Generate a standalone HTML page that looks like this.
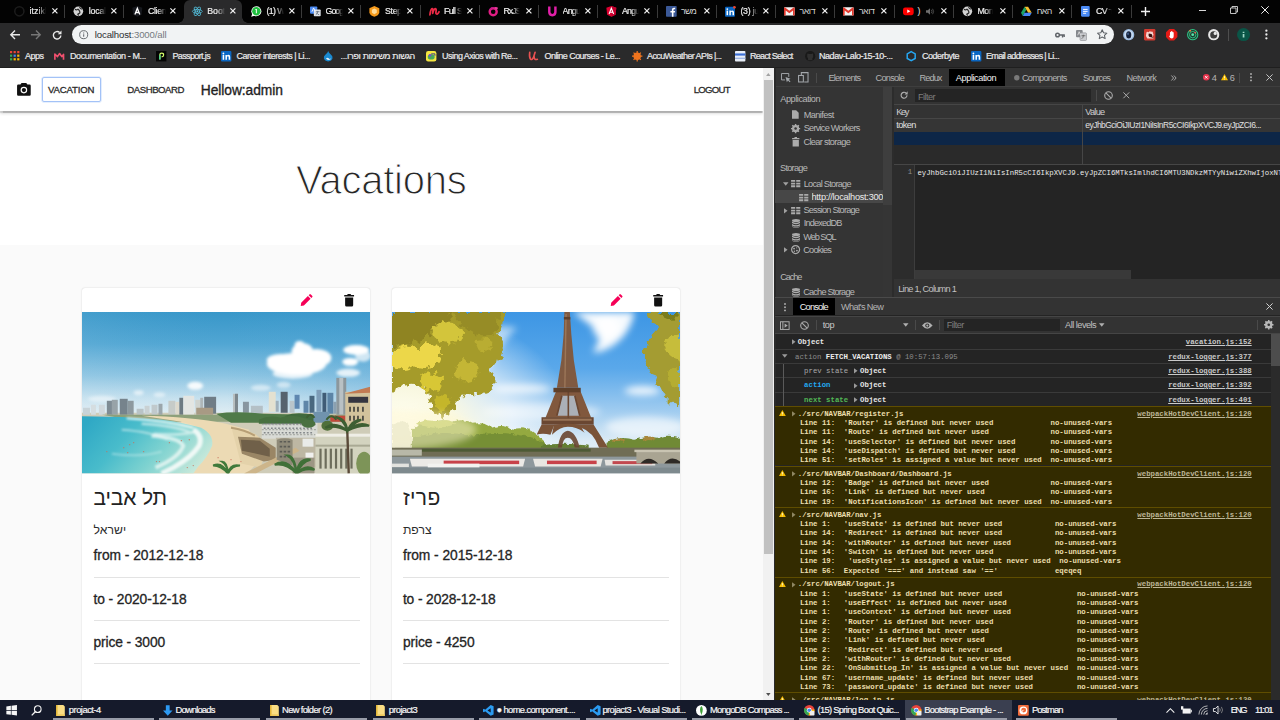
<!DOCTYPE html>
<html lang="en"><head><meta charset="utf-8"><title>Bootstrap Example</title>
<style>
*{box-sizing:border-box;margin:0;padding:0}
html,body{width:1280px;height:720px;overflow:hidden;background:#fff}
body{font-family:"Liberation Sans","DejaVu Sans",sans-serif;position:relative}
.abs{position:absolute}
.t{position:absolute;white-space:nowrap;line-height:1}
svg{position:absolute;overflow:visible}
#tabs{position:absolute;left:0;top:0;width:1280px;height:23px;background:#030303}
#tool{position:absolute;left:0;top:22.500px;width:1280px;height:45.500px;background:#2a2a2b}
.fade{-webkit-mask-image:linear-gradient(90deg,#000 55%,transparent 100%);mask-image:linear-gradient(90deg,#000 55%,transparent 100%);overflow:hidden}

#page{position:absolute;left:0;top:68px;width:763px;height:632px;background:#fafafa;overflow:hidden}
#nav{position:absolute;left:0;top:0;width:763px;height:42.500px;background:#fff;box-shadow:0 1.500px 1px rgba(0,0,0,.2),0 2.500px 3px rgba(0,0,0,.16)}
#hero{position:absolute;left:0;top:42px;width:763px;height:135px;background:#fff}
.card{position:absolute;top:288.200px;height:440px;background:#fff;border-radius:3px;box-shadow:0 0 1.500px rgba(0,0,0,.22);overflow:hidden}
.hr{position:absolute;height:1px;background:#e3e3e3}
#sb{position:absolute;left:763px;top:68px;width:11px;height:632px;background:#f1f1f1}
#sb .th{position:absolute;left:1px;top:12.300px;width:8.500px;height:473.700px;background:#c1c1c1}

#dev{position:absolute;left:774px;top:68px;width:506px;height:632px;background:#242424}
.wb{position:absolute;left:775px;width:496px;background:#332b00;border-top:1px solid #5f4d00}
.cr{position:absolute;left:775px;width:496px;height:1px;background:#3a3a3a}
.mm{position:absolute;white-space:pre;line-height:1;font-family:'Liberation Mono','DejaVu Sans Mono',monospace;font-size:7.330px;font-weight:bold;color:#ecdfae}

#tb{position:absolute;left:0;top:700px;width:1280px;height:20px;background:#151a2b}
.ul{position:absolute;top:718.200px;height:1.800px;background:#989ca8}
</style></head>
<body>
<div id="page"><div id="hero"></div><div id="nav"></div></div>
<svg style="left:17.100px;top:83.100px;width:13.800px;height:12.700px" viewBox="0 0 14 13"><path d="M4.600 0h4.800l1.200 1.600h2.200Q14 1.600 14 2.800v9Q14 13 12.800 13H1.200Q0 13 0 11.800v-9Q0 1.600 1.200 1.600h2.200z" fill="#111"/><circle cx="7" cy="7.300" r="3.400" fill="#fff"/><circle cx="7" cy="7.300" r="2.200" fill="#111"/></svg>
<div class="abs" style="left:42.200px;top:77.200px;width:58.800px;height:25.100px;border:1px solid #a3c2f7;border-radius:2px;box-shadow:0 0 0 .6px rgba(160,195,250,.5)"></div>
<div class="t" style="left:48px;top:82px;line-height:15px;font-size:9.6px;color:#2b2b2b;letter-spacing:-0.153px;-webkit-text-stroke:.3px #2b2b2b">VACATION</div>
<div class="t" style="left:127.3px;top:82px;line-height:15px;font-size:9.6px;color:#2b2b2b;letter-spacing:-0.453px;-webkit-text-stroke:.3px #2b2b2b">DASHBOARD</div>
<div class="t" style="left:200.8px;top:80px;line-height:21px;font-size:13.8px;color:#1f1f1f;letter-spacing:-0.069px;-webkit-text-stroke:.35px #1f1f1f">Hellow:admin</div>
<div class="t" style="left:693.7px;top:82px;line-height:15px;font-size:9.6px;color:#2b2b2b;letter-spacing:-0.703px;-webkit-text-stroke:.3px #2b2b2b">LOGOUT</div>
<div class="t" style="left:296px;top:151px;line-height:58px;font-size:40px;color:#262626;letter-spacing:-0.245px;-webkit-text-stroke:1.100px #fff">Vacations</div>
<div class="card" style="left:82.4px;width:288.100px"><svg style="left:0;top:23.700px;width:288.100px;height:161.600px" viewBox="0 0 290 162" preserveAspectRatio="none">
<defs>
<linearGradient id="sk1" x1="0" y1="0" x2="0" y2="1"><stop offset="0" stop-color="#3897c9"/><stop offset=".3" stop-color="#51a6d3"/><stop offset=".6" stop-color="#8cc4e2"/><stop offset=".82" stop-color="#c8e2ef"/><stop offset="1" stop-color="#e6f0f4"/></linearGradient>
<linearGradient id="skh" x1="0" y1="0" x2="1" y2="0"><stop offset="0" stop-color="#fff" stop-opacity=".06"/><stop offset=".5" stop-color="#5aa9da" stop-opacity="0"/><stop offset="1" stop-color="#4b9fd6" stop-opacity=".25"/></linearGradient>
<linearGradient id="sea1" x1="0" y1=".2" x2="1" y2=".6"><stop offset="0" stop-color="#2fa8c5"/><stop offset=".35" stop-color="#49bccb"/><stop offset=".65" stop-color="#7dd2d0"/><stop offset="1" stop-color="#c6e8da"/></linearGradient>
<filter id="b1" x="-20%" y="-20%" width="140%" height="140%"><feGaussianBlur stdDeviation="1.800"/></filter>
<filter id="b12" x="-20%" y="-20%" width="140%" height="140%"><feGaussianBlur stdDeviation="1"/></filter>
<filter id="b05" x="-5%" y="-5%" width="110%" height="110%"><feGaussianBlur stdDeviation=".45"/></filter>
<clipPath id="c1"><rect width="290" height="162"/></clipPath>
</defs>
<g clip-path="url(#c1)">
<rect width="290" height="106" fill="url(#sk1)"/>
<rect x="0" y="0" width="290" height="106" fill="url(#skh)"/>
<g filter="url(#b1)" fill="#fff">
<ellipse cx="216" cy="52" rx="30" ry="11"/><ellipse cx="222" cy="40" rx="11" ry="9"/><ellipse cx="236" cy="46" rx="15" ry="9"/><ellipse cx="200" cy="48" rx="14" ry="6"/><ellipse cx="219" cy="33" rx="5" ry="4"/><ellipse cx="212" cy="62" rx="20" ry="5" opacity=".8"/>
<ellipse cx="276" cy="38" rx="13" ry="5"/><ellipse cx="270" cy="50" rx="8" ry="4"/><ellipse cx="268" cy="61" rx="12" ry="4" opacity=".8"/><ellipse cx="283" cy="44" rx="8" ry="6" opacity=".7"/>
<ellipse cx="114" cy="74" rx="8" ry="4" opacity=".9"/><ellipse cx="57" cy="81" rx="5" ry="2.500" opacity=".6"/><ellipse cx="78" cy="83" rx="6" ry="2.500" opacity=".5"/><ellipse cx="20" cy="87" rx="14" ry="3" opacity=".45"/>
<ellipse cx="180" cy="76" rx="10" ry="3" opacity=".5"/><ellipse cx="203" cy="73" rx="7" ry="3" opacity=".5"/>
</g>
<rect x="0" y="101" width="290" height="61" fill="#cfccb8"/>
<g filter="url(#b05)"><rect x="1" y="96" width="7" height="7" fill="#c8d3d8"/><rect x="9" y="93" width="5" height="10" fill="#d5dde0"/><rect x="17" y="93" width="6" height="10" fill="#d0d8dc"/><rect x="25" y="89" width="6" height="14" fill="#7f8c94"/><rect x="30" y="88" width="6" height="15" fill="#98a3a8"/><rect x="38" y="87" width="8" height="16" fill="#76838c"/><rect x="46" y="89" width="6" height="14" fill="#8d999f"/><rect x="55" y="97" width="7" height="6" fill="#b9c3c6"/><rect x="63" y="94" width="5" height="9" fill="#c9d1d3"/><rect x="70" y="93" width="6" height="10" fill="#c0c9cc"/><rect x="77" y="92" width="4" height="11" fill="#9ba6ab"/><rect x="87" y="89" width="7" height="14" fill="#c6cbc8"/><rect x="94" y="90" width="4" height="13" fill="#ddd9cc"/><rect x="98" y="86" width="4" height="17" fill="#6d7a82"/><rect x="102" y="84" width="11" height="19" fill="#e3e5e2"/><rect x="114" y="88" width="5" height="15" fill="#cfd3cf"/><rect x="119" y="86" width="3" height="17" fill="#aeb6b8"/><rect x="123" y="85" width="12" height="17" fill="#707d86"/><rect x="115" y="96" width="17" height="7" fill="#a89a84"/><rect x="152" y="82" width="5" height="20" fill="#b9bfc0"/><rect x="154" y="82" width="3" height="20" fill="#7c878d"/><rect x="162" y="90" width="6" height="11" fill="#8896a0"/><rect x="170" y="94" width="12" height="8" fill="#b4c0c6"/><rect x="188" y="80" width="7" height="20" fill="#e4e1d0"/><rect x="195" y="89" width="3" height="11" fill="#9fb0bb"/><rect x="200" y="80" width="7" height="21" fill="#56636e"/><rect x="209" y="89" width="5" height="12" fill="#b9c4ca"/><rect x="214" y="83" width="5" height="14" fill="#5f87b0"/><rect x="223" y="89" width="5" height="12" fill="#5f86a8"/><rect x="229" y="84" width="5" height="17" fill="#49677f"/><rect x="236" y="78" width="5" height="22" fill="#7e9db8"/><rect x="242" y="81" width="4" height="20" fill="#3f5c76"/><rect x="247" y="81" width="6" height="21" fill="#5c84a6"/><rect x="253" y="90" width="3" height="12" fill="#8aa0b0"/><rect x="256" y="66" width="10" height="37" fill="#8c979c"/><rect x="259" y="66" width="4" height="37" fill="#b9c1c4"/>
<path d="M20 103h270v7H60z" fill="#8da07a"/>
<path d="M135 102q20-3 48 0l44 1v8H150z" fill="#4f7a48"/>
<path d="M205 104q12-5 30 0 8 2 10 6h-40z" fill="#3f6a3c"/>
</g>
<!-- parking / town -->
<g filter="url(#b05)">
<rect x="181" y="110" width="56" height="17" fill="#d9dbd6"/>
<path d="M181 113h56M181 118h56M181 123h56" stroke="#a9aca6" stroke-width="1.300" stroke-dasharray="2 1.500"/>
<rect x="233" y="100" width="16" height="11" fill="#6f93ad"/>
<rect x="250" y="104" width="16" height="6" fill="#c24a3a"/>
<rect x="265" y="80" width="25" height="34" fill="#d2c29c"/><path d="M264 82l26-7v6z" fill="#c17a52"/>
<rect x="268" y="85" width="20" height="6" fill="#34363f"/>
<rect x="269" y="95" width="1.6" height="5" fill="#3b3b38"/><rect x="273" y="95" width="1.6" height="5" fill="#3b3b38"/><rect x="277" y="95" width="1.6" height="5" fill="#3b3b38"/><rect x="282" y="95" width="1.6" height="5" fill="#3b3b38"/><rect x="269" y="104" width="1.6" height="5" fill="#3b3b38"/><rect x="273" y="104" width="1.6" height="5" fill="#3b3b38"/><rect x="277" y="104" width="1.6" height="5" fill="#3b3b38"/><rect x="282" y="104" width="1.6" height="5" fill="#3b3b38"/>
<path d="M195 126h42v30h-30z" fill="#bdb7a3"/>
<rect x="222" y="127" width="11" height="8" fill="#e9ebe8"/><rect x="225" y="141" width="8" height="6" fill="#f0f0ee"/>
</g>
<!-- sand -->
<path d="M60 104Q110 105 145 112L168 118Q176 130 178 150L166 162H100V110z" fill="#ecdab4"/>
<path d="M150 114l24 8 12 10-6 24-20-4z" fill="#e4d2aa"/>
<!-- amphitheatre -->
<g filter="url(#b05)">
<path d="M157 125l22 1 16 10v12l-12 2-22-8z" fill="#9a8665"/>
<path d="M160 128l19 1 10 8v8l-28-6z" fill="#6f6048"/>
<path d="M163 162l52-26 4 3-44 23z" fill="#cdb58a"/>
<path d="M150 116q14 2 24 8" stroke="#b79f76" stroke-width="2" fill="none"/>
</g>
<!-- sea -->
<path d="M0 104.500Q40 104.500 80 108 102 111 120 116 133 123 131 134 126 146 117 155L112 162H0z" fill="url(#sea1)"/>
<g filter="url(#b12)" fill="none" stroke="#f7fcfa">
<path d="M45 106.500Q85 109 112 116" stroke-width="2.200" opacity=".9"/>
<path d="M60 112Q95 114 110 121 96 124 72 122" stroke-width="2.500" opacity=".6"/>
<path d="M112 118Q122 124 118 134 110 146 92 156L80 162" stroke-width="5" opacity=".9"/>
<path d="M70 124Q98 126 102 134 98 146 74 156" stroke-width="4" opacity=".7"/>
<path d="M40 118Q70 120 86 128" stroke-width="2" opacity=".5"/>
<path d="M30 142Q60 146 80 140" stroke-width="2" opacity=".35"/>
</g>
<g fill="#c8705a" opacity=".8"><circle cx="25" cy="140" r=".7"/><circle cx="42" cy="136" r=".7"/><circle cx="48" cy="133" r=".7"/><circle cx="52" cy="131" r=".7"/><circle cx="62" cy="140" r=".7"/><circle cx="75" cy="150" r=".7"/><circle cx="88" cy="131" r=".7"/><circle cx="100" cy="129" r=".7"/><circle cx="108" cy="128" r=".7"/><circle cx="46" cy="141" r=".7"/><circle cx="78" cy="150" r=".7"/><circle cx="106" cy="156" r=".7"/><circle cx="112" cy="154" r=".7"/><circle cx="137" cy="146" r=".7"/><circle cx="150" cy="148" r=".7"/><circle cx="160" cy="150" r=".7"/></g>
<g filter="url(#b05)">
<path d="M178 108q10-5 22-2 10-4 22 0 8 2 12 6h-56z" fill="#46703f"/>
<path d="M196 128q8-3 16 0v26l-16-6z" fill="#8f8a78"/>
<path d="M199 130h12M199 135h12M199 140h12M199 145h12" stroke="#5b5b55" stroke-width="1.600" stroke-dasharray="2.500 1.500"/>
<path d="M183 112h50M183 116.500h50M183 121h50" stroke="#6f7478" stroke-width="1.400" stroke-dasharray="1.800 1.800" opacity=".8"/>
<ellipse cx="228" cy="112" rx="7" ry="4" fill="#4a7040"/><ellipse cx="247" cy="114" rx="6" ry="5" fill="#4f6f3a"/>
<rect x="212" y="146" width="22" height="16" fill="#9c9684"/>
</g>
<!-- front building -->
<g filter="url(#b05)">
<rect x="235" y="123" width="55" height="39" fill="#d3d3bf"/>
<rect x="235" y="122" width="55" height="3" fill="#efeee6"/>
<rect x="235" y="133" width="55" height="2" fill="#a9a994"/>
<rect x="239.0" y="137" width="2.2" height="20" fill="#6d6d5c"/><rect x="244.2" y="137" width="2.2" height="20" fill="#6d6d5c"/><rect x="249.4" y="137" width="2.2" height="20" fill="#6d6d5c"/><rect x="254.6" y="137" width="2.2" height="20" fill="#6d6d5c"/><rect x="259.8" y="137" width="2.2" height="20" fill="#6d6d5c"/><rect x="265.0" y="137" width="2.2" height="20" fill="#6d6d5c"/><rect x="270.2" y="137" width="2.2" height="20" fill="#6d6d5c"/>
<path d="M268.500 162L267 118" stroke="#5a4a38" stroke-width="2.400"/>
<path d="M267 119q-12-10-22-3 10-3 22 3 12-10 22-5-10-1-22 5-1-12-12-14 9 3 12 14 5-11 14-11-9 4-14 11z" fill="#3c5e30" stroke="#3c5e30" stroke-width="2.200"/>
<path d="M216 162q-10-16-22-9 12-2 22 9 2-16 14-14-9 2-14 14-2-18-9-18 7 4 9 18 9-10 18-4-11-2-18 4z" fill="#3f6f37" stroke="#3f6f37" stroke-width="2.200"/>
<path d="M147 162q-6-12-15-8 8 0 15 8 2-10 12-8-8 0-12 8-1-12-6-12 5 3 6 12z" fill="#3f7a3a" stroke="#3f7a3a" stroke-width="2"/>
<ellipse cx="284" cy="152" rx="8" ry="12" fill="#7d9458"/>
<path d="M226 106q4-6 8 0M246 108q5-7 10 0" stroke="#3c5e30" stroke-width="2" fill="none"/>
</g>
</g></svg></div>
<svg style="left:300.3px;top:294px;width:12.700px;height:12.700px" viewBox="0 0 14 14"><path d="M.8 13.200l.5-3.500 7.400-7.400 3 3-7.400 7.400zM9.600 1.400l1-1q.6-.5 1.200 0l1.800 1.800q.5.600 0 1.200l-1 1z" fill="#f50057"/></svg>
<svg style="left:343.7px;top:294px;width:10.300px;height:12.500px" viewBox="0 0 11 14"><path d="M1 3.800h9V12.500q0 1.500-1.500 1.500h-6Q1 14 1 12.500zM0 1h3.200L4 0h3l.8 1H11v1.800H0z" fill="#111"/></svg>
<div class="t" style="left:93.5px;top:482px;line-height:31px;font-size:21px;color:#222;letter-spacing:-0.129px;direction:rtl">תל אביב</div>
<div class="t" style="left:93.5px;top:521px;line-height:19px;font-size:12.2px;color:#2c2c2c;letter-spacing:0.029px;direction:rtl">ישראל</div>
<div class="t" style="left:93.5px;top:545px;line-height:21px;font-size:13.8px;color:#242424;letter-spacing:-0.026px;-webkit-text-stroke:.3px #242424">from - 2012-12-18</div>
<div class="hr" style="left:93.5px;top:576.5px;width:266.200px"></div>
<div class="t" style="left:93.5px;top:589px;line-height:21px;font-size:13.8px;color:#242424;letter-spacing:-0.09px;-webkit-text-stroke:.3px #242424">to - 2020-12-18</div>
<div class="hr" style="left:93.5px;top:619.7px;width:266.200px"></div>
<div class="t" style="left:93.5px;top:632px;line-height:21px;font-size:13.8px;color:#242424;letter-spacing:-0.113px;-webkit-text-stroke:.3px #242424">price - 3000</div>
<div class="hr" style="left:93.5px;top:662.8px;width:266.200px"></div>
<div class="card" style="left:391.8px;width:288.100px"><svg style="left:0;top:23.700px;width:288.100px;height:161.600px" viewBox="0 0 290 162" preserveAspectRatio="none">
<defs>
<linearGradient id="sk2" x1="0" y1="0" x2="0" y2="1"><stop offset="0" stop-color="#3d96e4"/><stop offset=".35" stop-color="#5aa8ea"/><stop offset=".62" stop-color="#a2cdf0"/><stop offset=".8" stop-color="#dcebf5"/><stop offset="1" stop-color="#e8f0f4"/></linearGradient>
<radialGradient id="sun" cx="0.030" cy="0.570" r="0.600" gradientTransform="scale(1 1.200)"><stop offset="0" stop-color="#fffff4" stop-opacity="1"/><stop offset=".3" stop-color="#fffbe0" stop-opacity=".95"/><stop offset=".65" stop-color="#fff" stop-opacity=".6"/><stop offset="1" stop-color="#fff" stop-opacity="0"/></radialGradient>
<linearGradient id="haze" x1="0" y1="0" x2="1" y2="0"><stop offset="0" stop-color="#fffbe6" stop-opacity=".7"/><stop offset="1" stop-color="#fffbe6" stop-opacity="0"/></linearGradient>
<filter id="b2" x="-30%" y="-30%" width="160%" height="160%"><feGaussianBlur stdDeviation="3.500"/></filter>
<filter id="b21" x="-20%" y="-20%" width="140%" height="140%"><feTurbulence type="fractalNoise" baseFrequency=".16" numOctaves="2" seed="7" result="n"/><feDisplacementMap in="SourceGraphic" in2="n" scale="11" xChannelSelector="R" yChannelSelector="G" result="d"/><feGaussianBlur in="d" stdDeviation=".55"/></filter>
<filter id="b23" x="-5%" y="-20%" width="110%" height="140%"><feTurbulence type="fractalNoise" baseFrequency=".22" numOctaves="2" seed="3" result="n"/><feDisplacementMap in="SourceGraphic" in2="n" scale="5" xChannelSelector="R" yChannelSelector="G" result="d"/><feGaussianBlur in="d" stdDeviation=".45"/></filter>
<filter id="b22" x="-5%" y="-5%" width="110%" height="110%"><feGaussianBlur stdDeviation=".5"/></filter>
<clipPath id="c2"><rect width="290" height="162"/></clipPath>
</defs>
<g clip-path="url(#c2)">
<rect width="290" height="162" fill="url(#sk2)"/>
<g filter="url(#b2)" fill="#fff">
<path d="M182 0h62q-4 22-22 34-14 8-20 6 10-12 4-22-10-8-24-18z" opacity=".95"/>
<ellipse cx="216" cy="16" rx="14" ry="12" opacity=".8"/>
<path d="M70 20q30-10 56-4-16 14-24 34-10 14-26 16-10-20-6-46z" opacity=".55"/>
<ellipse cx="130" cy="77" rx="30" ry="4" opacity=".75"/><ellipse cx="252" cy="79" rx="18" ry="4.500" opacity=".85"/>
<ellipse cx="150" cy="100" rx="60" ry="8" opacity=".5"/><ellipse cx="255" cy="115" rx="40" ry="10" opacity=".6"/>
</g>
<rect width="290" height="162" fill="url(#sun)"/>
<!-- foliage left -->
<g filter="url(#b21)">
<path d="M0 0h118q-8 10-10 22 6 12 2 24-10 4-12 12 8 10 4 18-10 8-22 6-8 0-14 8-6 10-14 16-8-2-12-10-4-16-10-22-14-6-30 6z" fill="#a59b2c"/>
<path d="M0 0h60q-4 14-18 18-8 12-22 12-10 8-20 4z" fill="#8f8424"/>
<path d="M60 0h50q-6 10-4 20-10 6-22 2-14-6-24-22z" fill="#968c26"/>
<path d="M0 40q14-10 26-4 12-8 22 0 4 12-6 18-12 6-20 0-12 6-22 2z" fill="#ecd748"/>
<path d="M40 14q14-8 26-2 8 8 2 16-12 6-22 0-8-6-6-14z" fill="#d3c53a"/>
<path d="M30 62q12-4 20 4 2 12-8 14-12 0-14-10z" fill="#d8c734"/>
<path d="M64 52q12-6 22 0 4 10-4 16-12 4-18-4-2-6 0-12z" fill="#c4b634"/>
<path d="M44 84q8-2 14 4-2 12-8 16-8-6-6-20z" fill="#c4b62c"/>
<path d="M84 28q10-4 18 2 0 10-8 12-10-2-10-14z" fill="#b9ad30"/>
</g>
<!-- foliage right -->
<g filter="url(#b21)">
<path d="M290 0h-34q4 10 12 16-10 10-16 24 4 12 8 20 6 10 10 16 4 10 12 16l8 2z" fill="#a49c30"/>
<path d="M290 20q-14 2-16 14 2 12 16 14z" fill="#c6bd3a"/>
<path d="M290 0h-22q6 8 14 8z" fill="#7a7c1e"/>
<path d="M290 56q-10 0-14 8 4 12 14 14z" fill="#b5ad30"/>
</g>
<!-- tree line -->
<g filter="url(#b23)">
<path d="M0 112q8-3 16 0l6 24H0z" fill="#d9dcc8" opacity=".8"/>
<path d="M20 118q6-8 18-6 10-6 22-2 12-4 22 2 10-2 18 4 12-4 22 2 12-4 22 4 6 2 8 8v10H20z" fill="#94a93f"/>
<path d="M20 126q30-8 60-2 30-6 62 2l12 6v6H20z" fill="#768f35"/>
<path d="M24 112q10-6 22-2 10-4 18 2-18 8-40 0z" fill="#b6c452"/>
<path d="M216 130q14-6 28-2 12-4 24-2 10-4 22 0v12h-74z" fill="#6f8a34"/>
<path d="M222 130q6-4 12 0M252 128q8-4 14 0" stroke="#a8873a" stroke-width="2.500" fill="none"/>
<path d="M150 134q20-4 48 0v6h-48z" fill="#647f30"/>
</g>
<ellipse cx="0" cy="118" rx="85" ry="20" fill="#fff7d0" opacity=".5" filter="url(#b2)"/>
<!-- Eiffel -->
<g filter="url(#b22)">
<path d="M173.500 0h5.500l1.500 22 2.500 26 4.500 28h-21.500l4.500-28 2.300-26z" fill="#7f5a42"/>
<path d="M165 80l-10.500 26h46L190 80z" fill="#81583c"/>
<path d="M171 84l-5 20h23l-5-20z" fill="#b9cde0" opacity=".75"/>
<path d="M171 84l-5 20M184 84l5 20M177.500 80v26" stroke="#6a4630" stroke-width="1.600"/>
<rect x="162.500" y="76" width="27.500" height="4.500" fill="#5e3f2c"/>
<rect x="150.500" y="105.500" width="52.500" height="7.500" fill="#6a4630"/>
<rect x="152" y="107" width="49" height="2" fill="#9a7558"/>
<path d="M150.500 113l-5 10q6-2 14 0l4-10zM203 113l14.500 23h-9q-6-16-18-20l-1-3z" fill="#7a5238"/>
<path d="M163 113q14-2 27 0 2 6 4 8-8-6-17-6-8 0-16 8z" fill="#7a5238"/>
<path d="M167 136q2-16 10-17 8 1 12 17h-5q-2-10-7-10t-6 10z" fill="#6a4630" opacity=".9"/>
<path d="M175.200 2L174 76" stroke="#a88262" stroke-width="1.400" opacity=".7"/>
<rect x="173" y="5" width="6.500" height="2.500" fill="#5e3f2c"/>
</g>
<!-- embankment, boats, river -->
<g filter="url(#b22)">
<rect x="0" y="136" width="290" height="10" fill="#6f6d55"/>
<rect x="30" y="137" width="170" height="3" fill="#4e5a34"/>
<rect x="0" y="138" width="30" height="6" fill="#b8b8a8"/>
<rect x="0" y="145" width="290" height="17" fill="#8e989c"/>
<path d="M18 147h116l-2 8H20z" fill="#eceae6"/><rect x="52" y="149" width="76" height="3.500" fill="#c8434a"/><rect x="36" y="152" width="52" height="4" fill="#f3f3f0"/>
<rect x="0" y="152" width="17" height="3.500" fill="#e3e3df"/>
<path d="M142 147h70l-2 8h-66z" fill="#e9e7e2"/><rect x="156" y="149" width="50" height="3.500" fill="#c8434a"/>
<path d="M214 148h51v6h-50z" fill="#e6e4e0"/><rect x="222" y="149.500" width="40" height="3" fill="#c24850"/>
<path d="M246 140h44v12h-44z" fill="#a9a492"/><path d="M250 152q8-10 18 0zM274 152q7-9 16-2v2z" fill="#2f2c28"/>
<rect x="244" y="138" width="46" height="2.500" fill="#c9c4b2"/>
<rect x="0" y="156" width="290" height="6" fill="#7e8a8e"/>
</g>
</g></svg></div>
<svg style="left:609.7px;top:294px;width:12.700px;height:12.700px" viewBox="0 0 14 14"><path d="M.8 13.200l.5-3.500 7.400-7.400 3 3-7.400 7.400zM9.600 1.400l1-1q.6-.5 1.200 0l1.800 1.800q.5.600 0 1.200l-1 1z" fill="#f50057"/></svg>
<svg style="left:653.1px;top:294px;width:10.300px;height:12.500px" viewBox="0 0 11 14"><path d="M1 3.800h9V12.500q0 1.500-1.500 1.500h-6Q1 14 1 12.500zM0 1h3.200L4 0h3l.8 1H11v1.800H0z" fill="#111"/></svg>
<div class="t" style="left:402.90000000000003px;top:482px;line-height:31px;font-size:21px;color:#222;letter-spacing:0.355px;direction:rtl">פריז</div>
<div class="t" style="left:402.90000000000003px;top:521px;line-height:19px;font-size:12.2px;color:#2c2c2c;letter-spacing:0.036px;direction:rtl">צרפת</div>
<div class="t" style="left:402.90000000000003px;top:545px;line-height:21px;font-size:13.8px;color:#242424;letter-spacing:-0.049px;-webkit-text-stroke:.3px #242424">from - 2015-12-18</div>
<div class="hr" style="left:402.90000000000003px;top:576.5px;width:266.200px"></div>
<div class="t" style="left:402.90000000000003px;top:589px;line-height:21px;font-size:13.8px;color:#242424;letter-spacing:-0.11px;-webkit-text-stroke:.3px #242424">to - 2028-12-18</div>
<div class="hr" style="left:402.90000000000003px;top:619.7px;width:266.200px"></div>
<div class="t" style="left:402.90000000000003px;top:632px;line-height:21px;font-size:13.8px;color:#242424;letter-spacing:-0.105px;-webkit-text-stroke:.3px #242424">price - 4250</div>
<div class="hr" style="left:402.90000000000003px;top:662.8px;width:266.200px"></div>
<div id="sb"><div class="th"></div><svg style="left:3px;top:5px;width:4.600px;height:3px" viewBox="0 0 6 4"><path d="M0 4L3 0 6 4z" fill="#a3a3a3"/></svg><svg style="left:3px;top:625px;width:4.600px;height:3px" viewBox="0 0 6 4"><path d="M0 0L3 4 6 0z" fill="#505050"/></svg></div>
<div id="dev"></div>
<div class="abs" style="left:774px;top:68px;width:506px;height:18.3px;background:#333"></div>
<div class="abs" style="left:949.3px;top:68.6px;width:55.5px;height:17.4px;background:#000"></div>
<div class="abs" style="left:775px;top:86px;width:505px;height:1px;background:#3e3e3e"></div>
<svg style="left:781px;top:73px;width:9.500px;height:9.500px" viewBox="0 0 11 11"><path d="M9 4.500V.6H.6V8h4" stroke="#a3a7ab" stroke-width="1.100" fill="none"/><path d="M5.300 4.500l1.500 6.200 1.300-2 2 2 .9-.9-2-2 2-1.200z" fill="#a3a7ab"/></svg>
<svg style="left:798.200px;top:72.300px;width:10.500px;height:10.600px" viewBox="0 0 11 11"><path d="M3.500 3V.6h7V10.400H6.500" stroke="#a3a7ab" stroke-width="1.100" fill="none"/><rect x=".6" y="3.600" width="5" height="6.800" stroke="#a3a7ab" stroke-width="1.100" fill="none"/></svg>
<div class="abs" style="left:816px;top:72.5px;width:1px;height:10.5px;background:#4a4a4a"></div>
<div class="t" style="left:828.4px;top:71px;line-height:14px;font-size:9.2px;color:#b3b3b3;letter-spacing:-0.802px">Elements</div>
<div class="t" style="left:875.6px;top:71px;line-height:14px;font-size:9.2px;color:#b3b3b3;letter-spacing:-0.76px">Console</div>
<div class="t" style="left:919.6px;top:71px;line-height:14px;font-size:9.2px;color:#b3b3b3;letter-spacing:-0.933px">Redux</div>
<div class="t" style="left:955.8px;top:71px;line-height:14px;font-size:9.2px;color:#f4f4f4;letter-spacing:-0.423px">Application</div>
<div class="t" style="left:1021.9px;top:71px;line-height:14px;font-size:9.2px;color:#b3b3b3;letter-spacing:-0.729px">Components</div>
<div class="t" style="left:1083.1px;top:71px;line-height:14px;font-size:9.2px;color:#b3b3b3;letter-spacing:-0.974px">Sources</div>
<div class="t" style="left:1126.4px;top:71px;line-height:14px;font-size:9.2px;color:#b3b3b3;letter-spacing:-0.529px">Network</div>
<svg style="left:1013.600px;top:74.800px;width:5.600px;height:5.600px" viewBox="0 0 6 6"><circle cx="3" cy="3" r="2.900" fill="#7a7a7a"/></svg>
<svg style="left:1170.600px;top:74.500px;width:5.500px;height:6px" viewBox="0 0 5.500 6"><path d="M.4.500L2.600 3 .4 5.500M2.900.5L5.100 3 2.900 5.500" stroke="#b3b3b3" stroke-width=".9" fill="none"/></svg>
<svg style="left:1202.800px;top:74.300px;width:6.600px;height:6.600px" viewBox="0 0 7 7"><circle cx="3.500" cy="3.500" r="3.500" fill="#e8364f"/><path d="M2.200 2.200l2.600 2.600M4.800 2.200L2.200 4.800" stroke="#fff" stroke-width=".95"/></svg>
<div class="t" style="left:1211.8px;top:71px;line-height:14px;font-size:9.2px;color:#b3b3b3">4</div>
<svg style="left:1220.5px;top:74.3px;width:7px;height:6.3px" viewBox="0 0 8 7"><path d="M4 0L8 7H0z" fill="#f5bd00"/><path d="M4 2.400v2.300M4 5.300v.9" stroke="#fff" stroke-width=".9"/></svg>
<div class="t" style="left:1229.7px;top:71px;line-height:14px;font-size:9.2px;color:#b3b3b3">6</div>
<div class="abs" style="left:1238.5px;top:72.5px;width:1px;height:10.5px;background:#4a4a4a"></div>
<svg style="left:1250px;top:73.39999999999999px;width:2px;height:8.400px" viewBox="0 0 2 8.400"><circle cx="1" cy="1" r=".95" fill="#b0b0b0"/><circle cx="1" cy="4.200" r=".95" fill="#b0b0b0"/><circle cx="1" cy="7.400" r=".95" fill="#b0b0b0"/></svg>
<svg style="left:1265.8px;top:74.1px;width:7px;height:7px" viewBox="0 0 7 7"><path d="M.4.400l6.200 6.200M6.600.400L.4 6.600" stroke="#c4c4c4" stroke-width="1"/></svg>
<div class="abs" style="left:774px;top:87px;width:109.4px;height:210.2px;background:#343434"></div>
<div class="abs" style="left:774px;top:68px;width:1.5px;height:632px;background:#2a2a2a"></div>
<div class="abs" style="left:883.4px;top:87px;width:9px;height:210.2px;background:#353535"></div>
<div class="abs" style="left:883.4px;top:87px;width:9px;height:118px;background:#3e3e3e"></div>
<div class="abs" style="left:892.4px;top:87px;width:1.6px;height:210.2px;background:#2c2c2c"></div>
<div class="abs" style="left:775px;top:190.2px;width:108.4px;height:12.6px;background:#474747"></div>
<div class="t" style="left:780.3px;top:92px;line-height:14px;font-size:9.2px;color:#b9b9b9;letter-spacing:-0.468px">Application</div>
<div class="t" style="left:803.7px;top:108px;line-height:14px;font-size:9.2px;color:#b9b9b9;letter-spacing:-0.579px">Manifest</div>
<div class="t" style="left:803.7px;top:121px;line-height:14px;font-size:9.2px;color:#b9b9b9;letter-spacing:-0.756px">Service Workers</div>
<div class="t" style="left:803.4px;top:135px;line-height:14px;font-size:9.2px;color:#b9b9b9;letter-spacing:-0.65px">Clear storage</div>
<div class="t" style="left:780px;top:161px;line-height:14px;font-size:9.2px;color:#b9b9b9;letter-spacing:-0.727px">Storage</div>
<div class="t" style="left:803.7px;top:177px;line-height:14px;font-size:9.2px;color:#b9b9b9;letter-spacing:-0.731px">Local Storage</div>
<div class="t" style="left:803.4px;top:203px;line-height:14px;font-size:9.2px;color:#b9b9b9;letter-spacing:-0.775px">Session Storage</div>
<div class="t" style="left:803.7px;top:216px;line-height:14px;font-size:9.2px;color:#b9b9b9;letter-spacing:-0.852px">IndexedDB</div>
<div class="t" style="left:803.2px;top:230px;line-height:14px;font-size:9.2px;color:#b9b9b9;letter-spacing:-1.025px">Web SQL</div>
<div class="t" style="left:803.2px;top:243px;line-height:14px;font-size:9.2px;color:#b9b9b9;letter-spacing:-0.743px">Cookies</div>
<div class="t" style="left:780.2px;top:270px;line-height:14px;font-size:9.2px;color:#b9b9b9;letter-spacing:-1.113px">Cache</div>
<div class="t" style="left:803.2px;top:285px;line-height:14px;font-size:9.2px;color:#b9b9b9;letter-spacing:-0.807px">Cache Storage</div>
<div class="t" style="left:811.5px;top:190px;line-height:14px;font-size:9.2px;color:#ececec;letter-spacing:-0.274px;width:71.900px;overflow:hidden">http://localhost:3000</div>
<svg style="left:792px;top:110px;width:6.700px;height:9px" viewBox="0 0 7 9"><path d="M0 0h4.300L7 2.700V9H0z" fill="#ababab"/></svg>
<svg style="left:790.6999999999999px;top:123.70000000000002px;width:9.2px;height:9.2px" viewBox="0 0 9 9"><circle cx="4.500" cy="4.500" r="2.700" fill="none" stroke="#ababab" stroke-width="1.700"/><path d="M4.500 0v9M0 4.500h9M1.300 1.300l6.400 6.400M7.700 1.300L1.300 7.700" stroke="#ababab" stroke-width="1.400"/><circle cx="4.500" cy="4.500" r="1.250" fill="#343434"/></svg>
<svg style="left:791.500px;top:136.600px;width:7.500px;height:9.400px" viewBox="0 0 7 9"><path d="M0 1h7v1.200H0zM.5 2.800h6V9h-6zM2.300 0h2.400v1H2.300z" fill="#ababab"/></svg>
<svg style="left:790.9px;top:180.3px;width:9.400px;height:7.200px" viewBox="0 0 9 7"><path d="M0 0h4v1.800H0zM5 0h4v1.800H5zM0 2.600h4v1.800H0zM5 2.600h4v1.800H5zM0 5.200h4V7H0zM5 5.200h4V7H5z" fill="#ababab"/></svg>
<svg style="left:799px;top:193.500px;width:9.400px;height:7.200px" viewBox="0 0 9 7"><path d="M0 0h4v1.800H0zM5 0h4v1.800H5zM0 2.600h4v1.800H0zM5 2.600h4v1.800H5zM0 5.200h4V7H0zM5 5.200h4V7H5z" fill="#ababab"/></svg>
<svg style="left:790.9px;top:206.8px;width:9.400px;height:7.200px" viewBox="0 0 9 7"><path d="M0 0h4v1.800H0zM5 0h4v1.800H5zM0 2.600h4v1.800H0zM5 2.600h4v1.800H5zM0 5.200h4V7H0zM5 5.200h4V7H5z" fill="#ababab"/></svg>
<svg style="left:791.5px;top:219px;width:8px;height:9px" viewBox="0 0 8 9"><ellipse cx="4" cy="1.500" rx="4" ry="1.500" fill="#ababab"/><path d="M0 2.600q4 2.400 8 0v1.400q-4 2.400-8 0zM0 5q4 2.400 8 0v1.400q-4 2.400-8 0zM0 7.300q4 2.400 8 0v.5q-4 2.600-8 0z" fill="#ababab"/></svg>
<svg style="left:791.5px;top:232.500px;width:8px;height:9px" viewBox="0 0 8 9"><ellipse cx="4" cy="1.500" rx="4" ry="1.500" fill="#ababab"/><path d="M0 2.600q4 2.400 8 0v1.400q-4 2.400-8 0zM0 5q4 2.400 8 0v1.400q-4 2.400-8 0zM0 7.300q4 2.400 8 0v.5q-4 2.600-8 0z" fill="#ababab"/></svg>
<svg style="left:791.5px;top:288px;width:8px;height:9px" viewBox="0 0 8 9"><ellipse cx="4" cy="1.500" rx="4" ry="1.500" fill="#ababab"/><path d="M0 2.600q4 2.400 8 0v1.400q-4 2.400-8 0zM0 5q4 2.400 8 0v1.400q-4 2.400-8 0zM0 7.300q4 2.400 8 0v.5q-4 2.600-8 0z" fill="#ababab"/></svg>
<svg style="left:790.800px;top:245.300px;width:9.200px;height:9.200px" viewBox="0 0 9 9"><circle cx="4.500" cy="4.500" r="3.900" fill="none" stroke="#ababab" stroke-width="1.200"/><circle cx="3" cy="3.500" r=".9" fill="#ababab"/><circle cx="5.800" cy="5.500" r=".9" fill="#ababab"/><circle cx="3.300" cy="6.200" r=".7" fill="#ababab"/><circle cx="5.600" cy="2.800" r=".6" fill="#ababab"/></svg>
<svg style="left:783px;top:182.2px;width:5.500px;height:4px" viewBox="0 0 6 4"><path d="M0 0h6L3 4z" fill="#a0a0a0"/></svg>
<svg style="left:784.3px;top:207.6px;width:3.500px;height:5.500px" viewBox="0 0 4 6"><path d="M0 0v6L4 3z" fill="#a0a0a0"/></svg>
<svg style="left:784.3px;top:247px;width:3.500px;height:5.500px" viewBox="0 0 4 6"><path d="M0 0v6L4 3z" fill="#a0a0a0"/></svg>
<div class="abs" style="left:894px;top:87px;width:386px;height:17px;background:#333"></div>
<svg style="left:899.800px;top:91.300px;width:8.300px;height:8.300px" viewBox="0 0 9 9"><path d="M7.600 4.700A3.200 3.200 0 1 1 6.500 2.200" stroke="#b0b0b0" stroke-width="1.200" fill="none"/><path d="M8.300.4v3.300H5z" fill="#b0b0b0"/></svg>
<div class="abs" style="left:915.4px;top:89.4px;width:175.4px;height:12.2px;background:#242424"></div>
<div class="t" style="left:918px;top:90px;line-height:14px;font-size:9.2px;color:#7d7d7d;letter-spacing:-0.57px">Filter</div>
<div class="abs" style="left:1095.6px;top:90px;width:1px;height:10.5px;background:#4a4a4a"></div>
<svg style="left:1104.0px;top:90.6px;width:9px;height:9px" viewBox="0 0 9 9"><circle cx="4.500" cy="4.500" r="3.800" fill="none" stroke="#adadad" stroke-width="1.100"/><path d="M1.900 1.900l5.200 5.200" stroke="#adadad" stroke-width="1.100"/></svg>
<svg style="left:1123.4px;top:91.8px;width:6.6px;height:6.6px" viewBox="0 0 7 7"><path d="M.4.400l6.200 6.200M6.600.400L.4 6.600" stroke="#b0b0b0" stroke-width="1"/></svg>
<div class="abs" style="left:894px;top:104px;width:386px;height:1px;background:#464646"></div>
<div class="abs" style="left:894px;top:105px;width:386px;height:12.6px;background:#333"></div>
<div class="abs" style="left:894px;top:117.6px;width:386px;height:1px;background:#464646"></div>
<div class="abs" style="left:894px;top:118.6px;width:386px;height:13.3px;background:#353535"></div>
<div class="abs" style="left:894px;top:131.9px;width:386px;height:13.3px;background:#0d2647"></div>
<div class="abs" style="left:894px;top:145.2px;width:386px;height:18.4px;background:#2a2a2a"></div>
<div class="abs" style="left:1082px;top:105px;width:1px;height:58.6px;background:#464646"></div>
<div class="abs" style="left:894px;top:163.6px;width:386px;height:1px;background:#464646"></div>
<div class="t" style="left:896.2px;top:105px;line-height:14px;font-size:9.2px;color:#cfcfcf;letter-spacing:-1.348px">Key</div>
<div class="t" style="left:1085.3px;top:105px;line-height:14px;font-size:9.2px;color:#cfcfcf;letter-spacing:-0.746px">Value</div>
<div class="t" style="left:896.2px;top:118px;line-height:14px;font-size:9.2px;color:#e0e0e0;letter-spacing:-0.557px">token</div>
<div class="t" style="left:1085.3px;top:119px;line-height:13px;font-size:8.5px;color:#e0e0e0;letter-spacing:-0.546px">eyJhbGciOiJIUzI1NiIsInR5cCI6IkpXVCJ9.eyJpZCI6...</div>
<div class="abs" style="left:894px;top:164.6px;width:20px;height:114.6px;background:#2c2c2c"></div>
<div class="abs" style="left:914px;top:164.6px;width:0.8px;height:114.6px;background:#3d3d3d"></div>
<div class="mm" style="left:907.8px;top:166px;line-height:12px;color:#8e8e8e;font-weight:normal">1</div>
<div class="abs" style="left:917.400px;top:164.600px;width:362.600px;height:20px;overflow:hidden"><div class="mm" style="left:0px;top:2px;line-height:12px;color:#ebebeb;font-weight:normal">eyJhbGciOiJIUzI1NiIsInR5cCI6IkpXVCJ9.eyJpZCI6MTksImlhdCI6MTU3NDkzMTYyNiwiZXhwIjoxNTc0OTM1MjI2fQ</div></div>
<div class="abs" style="left:914.8px;top:270px;width:216.5px;height:8.7px;background:#393939"></div>
<div class="abs" style="left:894px;top:279.2px;width:386px;height:18px;background:#333"></div>
<div class="t" style="left:898.2px;top:282px;line-height:14px;font-size:9.2px;color:#c2c2c2;letter-spacing:-0.717px">Line 1, Column 1</div>
<div class="abs" style="left:775px;top:297.2px;width:505px;height:1px;background:#4a4a4a"></div>
<div class="abs" style="left:775px;top:298.2px;width:505px;height:17.3px;background:#333"></div>
<svg style="left:784.3px;top:302.8px;width:2px;height:8.400px" viewBox="0 0 2 8.400"><circle cx="1" cy="1" r=".95" fill="#b0b0b0"/><circle cx="1" cy="4.200" r=".95" fill="#b0b0b0"/><circle cx="1" cy="7.400" r=".95" fill="#b0b0b0"/></svg>
<div class="abs" style="left:793.2px;top:298.3px;width:41.6px;height:16.9px;background:#000"></div>
<div class="t" style="left:799.8px;top:300px;line-height:14px;font-size:9.2px;color:#f4f4f4;letter-spacing:-0.817px">Console</div>
<div class="t" style="left:841px;top:300px;line-height:14px;font-size:9.2px;color:#b3b3b3;letter-spacing:-0.653px">What's New</div>
<svg style="left:1266.0px;top:303.3px;width:7px;height:7px" viewBox="0 0 7 7"><path d="M.4.400l6.200 6.200M6.600.400L.4 6.600" stroke="#d0d0d0" stroke-width="1"/></svg>
<div class="abs" style="left:775px;top:315.5px;width:505px;height:1px;background:#454545"></div>
<div class="abs" style="left:775px;top:316.5px;width:505px;height:16.8px;background:#333"></div>
<svg style="left:780.200px;top:320.500px;width:9.600px;height:9.200px" viewBox="0 0 10 9"><rect x=".5" y=".5" width="9" height="8" fill="none" stroke="#adadad"/><path d="M3 .5v8" stroke="#adadad"/><path d="M4.800 2.300v4.400l3.200-2.200z" fill="#adadad"/></svg>
<svg style="left:800.0px;top:320.6px;width:9px;height:9px" viewBox="0 0 9 9"><circle cx="4.500" cy="4.500" r="3.800" fill="none" stroke="#adadad" stroke-width="1.100"/><path d="M1.900 1.900l5.200 5.200" stroke="#adadad" stroke-width="1.100"/></svg>
<div class="abs" style="left:815.7px;top:319.7px;width:1px;height:10.5px;background:#4a4a4a"></div>
<div class="t" style="left:822.7px;top:318px;line-height:14px;font-size:9.2px;color:#c9c9c9;letter-spacing:-0.394px">top</div>
<svg style="left:903.3px;top:323.1px;width:5.500px;height:4px" viewBox="0 0 6 4"><path d="M0 0h6L3 4z" fill="#b0b0b0"/></svg>
<div class="abs" style="left:914.8px;top:319.7px;width:1px;height:10.5px;background:#4a4a4a"></div>
<svg style="left:921.500px;top:321.600px;width:10.600px;height:7.200px" viewBox="0 0 11 7"><path d="M0 3.500Q5.500-3.200 11 3.500 5.500 10.200 0 3.500z" fill="#b0b0b0"/><circle cx="5.500" cy="3.500" r="2.100" fill="#333"/><circle cx="5.500" cy="3.500" r="1.100" fill="#b0b0b0"/></svg>
<div class="abs" style="left:939px;top:319.7px;width:1px;height:10.5px;background:#4a4a4a"></div>
<div class="abs" style="left:944px;top:319.2px;width:115.6px;height:11.6px;background:#242424"></div>
<div class="t" style="left:946.8px;top:318px;line-height:14px;font-size:9.2px;color:#7d7d7d;letter-spacing:-0.57px">Filter</div>
<div class="t" style="left:1065.1px;top:318px;line-height:14px;font-size:9.2px;color:#c2c2c2;letter-spacing:-0.517px">All levels</div>
<svg style="left:1099.2px;top:323.1px;width:5.500px;height:4px" viewBox="0 0 6 4"><path d="M0 0h6L3 4z" fill="#b0b0b0"/></svg>
<div class="abs" style="left:1256.8px;top:319.7px;width:1px;height:10.5px;background:#4a4a4a"></div>
<svg style="left:1264.45px;top:320.25px;width:9.5px;height:9.5px" viewBox="0 0 9 9"><circle cx="4.500" cy="4.500" r="2.700" fill="none" stroke="#b9b9b9" stroke-width="1.700"/><path d="M4.500 0v9M0 4.500h9M1.300 1.300l6.400 6.400M7.700 1.300L1.300 7.700" stroke="#b9b9b9" stroke-width="1.400"/><circle cx="4.500" cy="4.500" r="1.250" fill="#333"/></svg>
<div class="abs" style="left:775px;top:333.3px;width:505px;height:1px;background:#454545"></div>
<div class="cr" style="top:348.9px"></div>
<div class="cr" style="top:363.1px"></div>
<div class="cr" style="top:377.3px"></div>
<div class="cr" style="top:391.5px"></div>
<div class="abs" style="left:782.7px;top:363.6px;width:0.8px;height:42px;background:#5a5a5a"></div>
<svg style="left:792px;top:339px;width:3.500px;height:5.500px" viewBox="0 0 4 6"><path d="M0 0v6L4 3z" fill="#9a9a9a"/></svg>
<div class="mm" style="left:797.8px;top:336px;line-height:12px;color:#e6e6e6">Object</div>
<div class="mm" style="right:28.3px;top:336px;line-height:12px;color:#c9c9c9;text-decoration:underline">vacation.js:152</div>
<svg style="left:781.8px;top:354.3px;width:5.500px;height:4px" viewBox="0 0 6 4"><path d="M0 0h6L3 4z" fill="#9a9a9a"/></svg>
<div class="mm" style="left:795px;top:351px;line-height:12px;color:#8c8c8c;font-weight:normal">action <span style="color:#eee;font-weight:bold">FETCH_VACATIONS</span> @ 10:57:13.095</div>
<div class="mm" style="right:28.3px;top:351px;line-height:12px;color:#c9c9c9;text-decoration:underline">redux-logger.js:377</div>
<div class="mm" style="left:804.1px;top:365px;line-height:12px;color:#a9a9a9;font-weight:normal">prev state</div>
<svg style="left:853.9px;top:368.2px;width:3.500px;height:5.500px" viewBox="0 0 4 6"><path d="M0 0v6L4 3z" fill="#9a9a9a"/></svg>
<div class="mm" style="left:860px;top:365px;line-height:12px;color:#e6e6e6">Object</div>
<div class="mm" style="right:28.3px;top:365px;line-height:12px;color:#c9c9c9;text-decoration:underline">redux-logger.js:388</div>
<div class="mm" style="left:804.1px;top:379px;line-height:12px;color:#22a9f2">action</div>
<svg style="left:853.9px;top:382.6px;width:3.500px;height:5.500px" viewBox="0 0 4 6"><path d="M0 0v6L4 3z" fill="#9a9a9a"/></svg>
<div class="mm" style="left:860px;top:379px;line-height:12px;color:#e6e6e6">Object</div>
<div class="mm" style="right:28.3px;top:379px;line-height:12px;color:#c9c9c9;text-decoration:underline">redux-logger.js:392</div>
<div class="mm" style="left:804.1px;top:394px;line-height:12px;color:#52b956">next state</div>
<svg style="left:853.9px;top:397.1px;width:3.500px;height:5.500px" viewBox="0 0 4 6"><path d="M0 0v6L4 3z" fill="#9a9a9a"/></svg>
<div class="mm" style="left:860px;top:394px;line-height:12px;color:#e6e6e6">Object</div>
<div class="mm" style="right:28.3px;top:394px;line-height:12px;color:#c9c9c9;text-decoration:underline">redux-logger.js:401</div>
<div class="wb" style="top:405.6px;height:59.9px"></div>
<svg style="left:779.1px;top:409.8px;width:6.8px;height:6.1px" viewBox="0 0 8 7"><path d="M4 0L8 7H0z" fill="#f5bd00"/><path d="M4 2.400v2.300M4 5.300v.9" stroke="#fff" stroke-width=".9"/></svg>
<svg style="left:791.9px;top:411.0px;width:3.500px;height:5.500px" viewBox="0 0 4 6"><path d="M0 0v6L4 3z" fill="#8f8763"/></svg>
<div class="mm" style="left:797.8px;top:408px;line-height:12px">./src/NAVBAR/register.js</div>
<div class="mm" style="right:28.3px;top:408px;line-height:12px;color:#bdb697;text-decoration:underline">webpackHotDevClient.js:120</div>
<div class="mm" style="left:799.9px;top:417px;line-height:12px">Line 11:  'Router' is defined but never used             no-unused-vars</div>
<div class="mm" style="left:799.9px;top:426px;line-height:12px">Line 11:  'Route' is defined but never used              no-unused-vars</div>
<div class="mm" style="left:799.9px;top:436px;line-height:12px">Line 14:  'useSelector' is defined but never used        no-unused-vars</div>
<div class="mm" style="left:799.9px;top:445px;line-height:12px">Line 14:  'useDispatch' is defined but never used        no-unused-vars</div>
<div class="mm" style="left:799.9px;top:454px;line-height:12px">Line 51:  'setRoles' is assigned a value but never used  no-unused-vars</div>
<div class="wb" style="top:465.5px;height:41px"></div>
<svg style="left:779.1px;top:469.7px;width:6.8px;height:6.1px" viewBox="0 0 8 7"><path d="M4 0L8 7H0z" fill="#f5bd00"/><path d="M4 2.400v2.300M4 5.300v.9" stroke="#fff" stroke-width=".9"/></svg>
<svg style="left:791.9px;top:470.9px;width:3.500px;height:5.500px" viewBox="0 0 4 6"><path d="M0 0v6L4 3z" fill="#8f8763"/></svg>
<div class="mm" style="left:797.8px;top:468px;line-height:12px">./src/NAVBAR/Dashboard/Dashboard.js</div>
<div class="mm" style="right:28.3px;top:468px;line-height:12px;color:#bdb697;text-decoration:underline">webpackHotDevClient.js:120</div>
<div class="mm" style="left:799.9px;top:477px;line-height:12px">Line 12:  'Badge' is defined but never used              no-unused-vars</div>
<div class="mm" style="left:799.9px;top:486px;line-height:12px">Line 16:  'Link' is defined but never used               no-unused-vars</div>
<div class="mm" style="left:799.9px;top:496px;line-height:12px">Line 19:  'NotificationsIcon' is defined but never used  no-unused-vars</div>
<div class="wb" style="top:506.5px;height:70.5px"></div>
<svg style="left:779.1px;top:510.7px;width:6.8px;height:6.1px" viewBox="0 0 8 7"><path d="M4 0L8 7H0z" fill="#f5bd00"/><path d="M4 2.400v2.300M4 5.300v.9" stroke="#fff" stroke-width=".9"/></svg>
<svg style="left:791.9px;top:511.9px;width:3.500px;height:5.500px" viewBox="0 0 4 6"><path d="M0 0v6L4 3z" fill="#8f8763"/></svg>
<div class="mm" style="left:797.8px;top:509px;line-height:12px">./src/NAVBAR/nav.js</div>
<div class="mm" style="right:28.3px;top:509px;line-height:12px;color:#bdb697;text-decoration:underline">webpackHotDevClient.js:120</div>
<div class="mm" style="left:799.9px;top:518px;line-height:12px">Line 1:   'useState' is defined but never used            no-unused-vars</div>
<div class="mm" style="left:799.9px;top:527px;line-height:12px">Line 14:  'Redirect' is defined but never used            no-unused-vars</div>
<div class="mm" style="left:799.9px;top:537px;line-height:12px">Line 14:  'withRouter' is defined but never used          no-unused-vars</div>
<div class="mm" style="left:799.9px;top:546px;line-height:12px">Line 14:  'Switch' is defined but never used              no-unused-vars</div>
<div class="mm" style="left:799.9px;top:555px;line-height:12px">Line 19:   'useStyles' is assigned a value but never used  no-unused-vars</div>
<div class="mm" style="left:799.9px;top:565px;line-height:12px">Line 56:  Expected '===' and instead saw '=='             eqeqeq</div>
<div class="wb" style="top:577.0px;height:115px"></div>
<svg style="left:779.1px;top:581.2px;width:6.8px;height:6.1px" viewBox="0 0 8 7"><path d="M4 0L8 7H0z" fill="#f5bd00"/><path d="M4 2.400v2.300M4 5.300v.9" stroke="#fff" stroke-width=".9"/></svg>
<svg style="left:791.9px;top:582.4px;width:3.500px;height:5.500px" viewBox="0 0 4 6"><path d="M0 0v6L4 3z" fill="#8f8763"/></svg>
<div class="mm" style="left:797.8px;top:578px;line-height:12px">./src/NAVBAR/logout.js</div>
<div class="mm" style="right:28.3px;top:578px;line-height:12px;color:#bdb697;text-decoration:underline">webpackHotDevClient.js:120</div>
<div class="mm" style="left:799.9px;top:588px;line-height:12px">Line 1:   'useState' is defined but never used                 no-unused-vars</div>
<div class="mm" style="left:799.9px;top:597px;line-height:12px">Line 1:   'useEffect' is defined but never used                no-unused-vars</div>
<div class="mm" style="left:799.9px;top:606px;line-height:12px">Line 1:   'useContext' is defined but never used               no-unused-vars</div>
<div class="mm" style="left:799.9px;top:616px;line-height:12px">Line 2:   'Router' is defined but never used                   no-unused-vars</div>
<div class="mm" style="left:799.9px;top:625px;line-height:12px">Line 2:   'Route' is defined but never used                    no-unused-vars</div>
<div class="mm" style="left:799.9px;top:634px;line-height:12px">Line 2:   'Link' is defined but never used                     no-unused-vars</div>
<div class="mm" style="left:799.9px;top:644px;line-height:12px">Line 2:   'Redirect' is defined but never used                 no-unused-vars</div>
<div class="mm" style="left:799.9px;top:653px;line-height:12px">Line 2:   'withRouter' is defined but never used               no-unused-vars</div>
<div class="mm" style="left:799.9px;top:662px;line-height:12px">Line 22:  'OnSubmitLog_In' is assigned a value but never used  no-unused-vars</div>
<div class="mm" style="left:799.9px;top:672px;line-height:12px">Line 67:  'username_update' is defined but never used          no-unused-vars</div>
<div class="mm" style="left:799.9px;top:681px;line-height:12px">Line 73:  'password_update' is defined but never used          no-unused-vars</div>
<div class="wb" style="top:692.0px;height:20px"></div>
<svg style="left:779.1px;top:696.2px;width:6.8px;height:6.1px" viewBox="0 0 8 7"><path d="M4 0L8 7H0z" fill="#f5bd00"/><path d="M4 2.400v2.300M4 5.300v.9" stroke="#fff" stroke-width=".9"/></svg>
<svg style="left:791.9px;top:697.4px;width:3.500px;height:5.500px" viewBox="0 0 4 6"><path d="M0 0v6L4 3z" fill="#8f8763"/></svg>
<div class="mm" style="left:797.8px;top:694px;line-height:12px">./src/NAVBAR/log_in.js</div>
<div class="mm" style="right:28.3px;top:694px;line-height:12px;color:#bdb697;text-decoration:underline">webpackHotDevClient.js:120</div>
<div class="abs" style="left:1271px;top:334.3px;width:9px;height:366px;background:#2b2b2b"></div>
<div class="abs" style="left:1271px;top:334.3px;width:9px;height:32px;background:#4d4d4d"></div>
<div id="tabs"></div>
<div id="tool"></div>
<div class="abs" style="left:64.2px;top:5px;width:1px;height:13px;background:#3a3a3a"></div>
<svg style="left:13.8px;top:6.0px;width:10.7px;height:10.7px" viewBox="0 0 14 14"><circle cx="7" cy="7" r="6" fill="none" stroke="#1c1c1c" stroke-width="2"/></svg>
<div class="t fade" style="left:29.4px;top:4px;line-height:14px;font-size:8.8px;color:#eeeeee;letter-spacing:0.065px;width:17px;-webkit-text-stroke:.2px #eee">itzikl</div>
<svg style="left:51.8px;top:8.400px;width:5.800px;height:5.800px" viewBox="0 0 6 6"><path d="M.4.400L5.600 5.600M5.600.400L.4 5.600" stroke="#f2f2f2" stroke-width="1.250" fill="none"/></svg>
<div class="abs" style="left:123.4px;top:5px;width:1px;height:13px;background:#3a3a3a"></div>
<svg style="left:73.0px;top:6.0px;width:10.7px;height:10.7px" viewBox="0 0 14 14"><circle cx="7" cy="7" r="6.300" fill="#d4d4d4"/><path d="M2.500 4.500q2.500 1 3.500 0t2.500 2-1 3.500 0 2.500M8.500 1.500q1 2.500 3.500 2.500" stroke="#2a2a2a" stroke-width="1.600" fill="none"/></svg>
<div class="t fade" style="left:88.7px;top:4px;line-height:14px;font-size:8.8px;color:#eeeeee;letter-spacing:-0.119px;width:17px;-webkit-text-stroke:.2px #eee">local</div>
<svg style="left:111.0px;top:8.400px;width:5.800px;height:5.800px" viewBox="0 0 6 6"><path d="M.4.400L5.600 5.600M5.600.400L.4 5.600" stroke="#f2f2f2" stroke-width="1.250" fill="none"/></svg>
<svg style="left:132.2px;top:6.0px;width:10.7px;height:10.7px" viewBox="0 0 14 14"><path d="M7 0L13.500 2.300 12.500 11.300 7 14 1.500 11.300 .5 2.300z" fill="#16181d"/><path d="M3.800 11L7 3 10.200 11M5.200 8.500h3.600" stroke="#fff" stroke-width="1.700" fill="none"/></svg>
<div class="t fade" style="left:147.9px;top:4px;line-height:14px;font-size:8.8px;color:#eeeeee;letter-spacing:-0.309px;width:18px;-webkit-text-stroke:.2px #eee">Clien</div>
<svg style="left:170.3px;top:8.400px;width:5.800px;height:5.800px" viewBox="0 0 6 6"><path d="M.4.400L5.600 5.600M5.600.400L.4 5.600" stroke="#f2f2f2" stroke-width="1.250" fill="none"/></svg>
<div class="abs" style="left:183.5px;top:0;width:58.6px;height:23px;background:#2a2a2b;border-radius:6px 6px 0 0"></div>
<div class="abs" style="left:177.5px;top:17px;width:6px;height:6px;background:radial-gradient(circle at 0 0,transparent 5.500px,#2a2a2b 6px)"></div>
<div class="abs" style="left:242.1px;top:17px;width:6px;height:6px;background:radial-gradient(circle at 100% 0,transparent 5.500px,#2a2a2b 6px)"></div>
<svg style="left:191.5px;top:6.0px;width:10.7px;height:10.7px" viewBox="0 0 14 14"><g fill="none" stroke="#53c1de" stroke-width="1"><ellipse cx="7" cy="7" rx="6.500" ry="2.500"/><ellipse cx="7" cy="7" rx="6.500" ry="2.500" transform="rotate(60 7 7)"/><ellipse cx="7" cy="7" rx="6.500" ry="2.500" transform="rotate(120 7 7)"/></g><circle cx="7" cy="7" r="1.300" fill="#53c1de"/></svg>
<div class="t fade" style="left:207.2px;top:4px;line-height:14px;font-size:8.8px;color:#eeeeee;letter-spacing:-0.027px;width:17.5px;-webkit-text-stroke:.2px #eee">Boot</div>
<svg style="left:229.5px;top:8.400px;width:5.800px;height:5.800px" viewBox="0 0 6 6"><path d="M.4.400L5.600 5.600M5.600.400L.4 5.600" stroke="#f2f2f2" stroke-width="1.250" fill="none"/></svg>
<div class="abs" style="left:301.1px;top:5px;width:1px;height:13px;background:#3a3a3a"></div>
<svg style="left:250.8px;top:6.0px;width:10.7px;height:10.7px" viewBox="0 0 14 14"><circle cx="7" cy="6.800" r="6.600" fill="#fff"/><path d="M.3 14L1.800 9.500 5.500 12.500z" fill="#fff"/><circle cx="7" cy="6.800" r="5.500" fill="#1fbf3f"/><path d="M7 4v5.500M5.800 5.200L7 4" stroke="#fff" stroke-width="1.300" fill="none"/></svg>
<div class="t fade" style="left:266.4px;top:4px;line-height:14px;font-size:8.8px;color:#eeeeee;letter-spacing:-0.6px;width:18px;-webkit-text-stroke:.2px #eee">(1) W</div>
<svg style="left:288.8px;top:8.400px;width:5.800px;height:5.800px" viewBox="0 0 6 6"><path d="M.4.400L5.600 5.600M5.600.400L.4 5.600" stroke="#f2f2f2" stroke-width="1.250" fill="none"/></svg>
<div class="abs" style="left:360.4px;top:5px;width:1px;height:13px;background:#3a3a3a"></div>
<svg style="left:310.0px;top:6.0px;width:10.7px;height:10.7px" viewBox="0 0 14 14"><rect x="0" y=".5" width="9.500" height="9.500" rx="1" fill="#4a8af4"/><rect x="5" y="4.500" width="9" height="9" rx="1" fill="#dfe3ea"/><path d="M2.500 7.500L4.700 2.500 7 7.500" stroke="#fff" stroke-width="1.200" fill="none"/><path d="M7.500 7.500h5M10 6.500v1q0 2.500-2.500 4M8.500 9q1.500 2 3.500 2.600" stroke="#5a6676" stroke-width="1" fill="none"/></svg>
<div class="t fade" style="left:325.6px;top:4px;line-height:14px;font-size:8.8px;color:#eeeeee;letter-spacing:-1.008px;width:17px;-webkit-text-stroke:.2px #eee">Goog</div>
<svg style="left:348.1px;top:8.400px;width:5.800px;height:5.800px" viewBox="0 0 6 6"><path d="M.4.400L5.600 5.600M5.600.400L.4 5.600" stroke="#f2f2f2" stroke-width="1.250" fill="none"/></svg>
<div class="abs" style="left:419.6px;top:5px;width:1px;height:13px;background:#3a3a3a"></div>
<svg style="left:369.2px;top:6.0px;width:10.7px;height:10.7px" viewBox="0 0 14 14"><path d="M7 0L13.500 2.800v6Q12.500 12.500 7 14 1.500 12.500 .5 8.800v-6z" fill="#f59a1c"/><path d="M3.800 5L7 3.300 10.200 5v4L7 10.700 3.800 9z" fill="#ffdc9a"/></svg>
<div class="t fade" style="left:384.9px;top:4px;line-height:14px;font-size:8.8px;color:#eeeeee;letter-spacing:-0.277px;width:16.5px;-webkit-text-stroke:.2px #eee">Step</div>
<svg style="left:407.3px;top:8.400px;width:5.800px;height:5.800px" viewBox="0 0 6 6"><path d="M.4.400L5.600 5.600M5.600.400L.4 5.600" stroke="#f2f2f2" stroke-width="1.250" fill="none"/></svg>
<div class="abs" style="left:478.9px;top:5px;width:1px;height:13px;background:#3a3a3a"></div>
<svg style="left:428.5px;top:6.0px;width:10.7px;height:10.7px" viewBox="0 0 14 14"><path d="M1.200 11.500Q1.800 5.500 3.600 3.600 5 2.600 5.200 5L4.800 9.500Q6 4.800 7.800 3.600 9.300 2.800 9.400 5.200L9 9Q9.200 11 11 10.300 12.600 9.500 13.200 7.500" stroke="#ea2a46" stroke-width="2.300" fill="none" stroke-linecap="round" stroke-linejoin="round"/></svg>
<div class="t fade" style="left:444.1px;top:4px;line-height:14px;font-size:8.8px;color:#eeeeee;letter-spacing:-0.75px;width:17.5px;-webkit-text-stroke:.2px #eee">Full S</div>
<svg style="left:466.6px;top:8.400px;width:5.800px;height:5.800px" viewBox="0 0 6 6"><path d="M.4.400L5.600 5.600M5.600.400L.4 5.600" stroke="#f2f2f2" stroke-width="1.250" fill="none"/></svg>
<div class="abs" style="left:538.1px;top:5px;width:1px;height:13px;background:#3a3a3a"></div>
<svg style="left:487.7px;top:6.0px;width:10.7px;height:10.7px" viewBox="0 0 14 14"><circle cx="6.800" cy="7.500" r="4.600" fill="none" stroke="#e01d84" stroke-width="3.200"/><path d="M8.500 1.500Q11.500 .5 13.200 2.500 12 5 10 4.500z" fill="#e63d9c"/><path d="M2 5Q4 1.500 8 2" stroke="#b7178c" stroke-width="1.500" fill="none"/></svg>
<div class="t fade" style="left:503.4px;top:4px;line-height:14px;font-size:8.8px;color:#eeeeee;letter-spacing:-1.008px;width:16.5px;-webkit-text-stroke:.2px #eee">RxJS</div>
<svg style="left:525.8px;top:8.400px;width:5.800px;height:5.800px" viewBox="0 0 6 6"><path d="M.4.400L5.600 5.600M5.600.400L.4 5.600" stroke="#f2f2f2" stroke-width="1.250" fill="none"/></svg>
<div class="abs" style="left:597.4px;top:5px;width:1px;height:13px;background:#3a3a3a"></div>
<svg style="left:547.0px;top:6.0px;width:10.7px;height:10.7px" viewBox="0 0 14 14"><path d="M3 .5v7.500q0 4 4 4t4-4V.500" stroke="#e21fa9" stroke-width="3.200" fill="none"/></svg>
<div class="t fade" style="left:562.6px;top:4px;line-height:14px;font-size:8.8px;color:#eeeeee;letter-spacing:-0.762px;width:17px;-webkit-text-stroke:.2px #eee">Angu</div>
<svg style="left:585.0px;top:8.400px;width:5.800px;height:5.800px" viewBox="0 0 6 6"><path d="M.4.400L5.600 5.600M5.600.400L.4 5.600" stroke="#f2f2f2" stroke-width="1.250" fill="none"/></svg>
<div class="abs" style="left:656.6px;top:5px;width:1px;height:13px;background:#3a3a3a"></div>
<svg style="left:606.2px;top:6.0px;width:10.7px;height:10.7px" viewBox="0 0 14 14"><path d="M7 0L13.500 2.300 12.500 11.300 7 14 1.500 11.300 .5 2.300z" fill="#dd0031"/><path d="M7 0L13.500 2.300 12.500 11.300 7 14z" fill="#c3002f"/><path d="M4 10.500L7 3 10 10.500M5.200 8.300h3.600" stroke="#fff" stroke-width="1.400" fill="none"/></svg>
<div class="t fade" style="left:621.9px;top:4px;line-height:14px;font-size:8.8px;color:#eeeeee;letter-spacing:-0.762px;width:17px;-webkit-text-stroke:.2px #eee">Angu</div>
<svg style="left:644.3px;top:8.400px;width:5.800px;height:5.800px" viewBox="0 0 6 6"><path d="M.4.400L5.600 5.600M5.600.400L.4 5.600" stroke="#f2f2f2" stroke-width="1.250" fill="none"/></svg>
<div class="abs" style="left:715.9px;top:5px;width:1px;height:13px;background:#3a3a3a"></div>
<svg style="left:665.5px;top:6.0px;width:10.7px;height:10.7px" viewBox="0 0 14 14"><rect width="14" height="14" rx="1" fill="#3b5998"/><path d="M9.800 14V8.600h1.800l.3-2.100H9.800V5.200q0-1 1-1h1.200V2.300Q11.300 2.200 10.300 2.200q-2.600 0-2.600 2.800v1.500H5.800v2.100h1.900V14z" fill="#fff"/></svg>
<div class="t" style="left:681.1px;top:4px;line-height:14px;font-size:8.8px;color:#d4d4d4;letter-spacing:-0.698px;direction:rtl">משר</div>
<svg style="left:703.5px;top:8.400px;width:5.800px;height:5.800px" viewBox="0 0 6 6"><path d="M.4.400L5.600 5.600M5.600.400L.4 5.600" stroke="#f2f2f2" stroke-width="1.250" fill="none"/></svg>
<div class="abs" style="left:775.1px;top:5px;width:1px;height:13px;background:#3a3a3a"></div>
<svg style="left:724.8px;top:6.0px;width:10.7px;height:10.7px" viewBox="0 0 14 14"><rect x="0" y="1" width="13" height="13" rx="1.200" fill="#0a66c2"/><rect x="2" y="6" width="2" height="6" fill="#fff"/><circle cx="3" cy="4" r="1.200" fill="#fff"/><path d="M5.700 6h1.900v.9q.6-1.100 2.100-1.100 2.100 0 2.100 2.500V12H9.800V8.700q0-1.200-1-1.200-1.200 0-1.200 1.400V12H5.700z" fill="#fff"/><circle cx="12.300" cy="1.800" r="1.800" fill="#e8452c"/></svg>
<div class="t fade" style="left:740.4px;top:4px;line-height:14px;font-size:8.8px;color:#eeeeee;letter-spacing:-0.258px;width:18px;-webkit-text-stroke:.2px #eee">(3) ju</div>
<svg style="left:762.8px;top:8.400px;width:5.800px;height:5.800px" viewBox="0 0 6 6"><path d="M.4.400L5.600 5.600M5.600.400L.4 5.600" stroke="#f2f2f2" stroke-width="1.250" fill="none"/></svg>
<div class="abs" style="left:834.4px;top:5px;width:1px;height:13px;background:#3a3a3a"></div>
<svg style="left:784.0px;top:6.0px;width:10.7px;height:10.7px" viewBox="0 0 14 14"><rect x="0" y="1.500" width="14" height="11" rx="1" fill="#f4f4f4"/><path d="M0 2.500V12.500h2.200V5.800L7 9.500l4.800-3.700v6.700H14V2.500q0-1-1-1L7 6.300 1 1.500q-1 0-1 1z" fill="#e2382d"/></svg>
<div class="t" style="left:799.6px;top:4px;line-height:14px;font-size:8.8px;color:#d4d4d4;letter-spacing:-0.473px;direction:rtl">דואר</div>
<svg style="left:822.0px;top:8.400px;width:5.800px;height:5.800px" viewBox="0 0 6 6"><path d="M.4.400L5.600 5.600M5.600.400L.4 5.600" stroke="#f2f2f2" stroke-width="1.250" fill="none"/></svg>
<div class="abs" style="left:893.6px;top:5px;width:1px;height:13px;background:#3a3a3a"></div>
<svg style="left:843.2px;top:6.0px;width:10.7px;height:10.7px" viewBox="0 0 14 14"><rect x="0" y="1.500" width="14" height="11" rx="1" fill="#f4f4f4"/><path d="M0 2.500V12.500h2.200V5.800L7 9.500l4.800-3.700v6.700H14V2.500q0-1-1-1L7 6.300 1 1.500q-1 0-1 1z" fill="#e2382d"/></svg>
<div class="t" style="left:858.9px;top:4px;line-height:14px;font-size:8.8px;color:#d4d4d4;letter-spacing:-0.473px;direction:rtl">דואר</div>
<svg style="left:881.3px;top:8.400px;width:5.800px;height:5.800px" viewBox="0 0 6 6"><path d="M.4.400L5.600 5.600M5.600.400L.4 5.600" stroke="#f2f2f2" stroke-width="1.250" fill="none"/></svg>
<div class="abs" style="left:952.9px;top:5px;width:1px;height:13px;background:#3a3a3a"></div>
<svg style="left:902.5px;top:6.0px;width:10.7px;height:10.7px" viewBox="0 0 14 14"><rect x="0" y="2" width="14" height="10" rx="2.800" fill="#f00"/><path d="M5.600 4.700v4.600L9.700 7z" fill="#fff"/></svg>
<div class="t" style="left:917.6px;top:4px;line-height:14px;font-size:8.8px;color:#eeeeee">)</div>
<svg style="left:926.1px;top:8px;width:8px;height:7px" viewBox="0 0 8 7"><path d="M0 2.200h1.800L4 .3v6.400L1.800 4.800H0z" fill="#6e6e6e"/><path d="M5.300 1.800q1.400 1.700 0 3.400M6.600.8q2 2.700 0 5.400" stroke="#5a5a5a" stroke-width=".8" fill="none"/></svg>
<svg style="left:940.5px;top:8.400px;width:5.800px;height:5.800px" viewBox="0 0 6 6"><path d="M.4.400L5.600 5.600M5.600.400L.4 5.600" stroke="#f2f2f2" stroke-width="1.250" fill="none"/></svg>
<div class="abs" style="left:1012.1px;top:5px;width:1px;height:13px;background:#3a3a3a"></div>
<svg style="left:961.8px;top:6.0px;width:10.7px;height:10.7px" viewBox="0 0 14 14"><circle cx="7" cy="7" r="6.300" fill="#d4d4d4"/><path d="M2.500 4.500q2.500 1 3.500 0t2.500 2-1 3.500 0 2.500M8.500 1.500q1 2.500 3.500 2.500" stroke="#2a2a2a" stroke-width="1.600" fill="none"/></svg>
<div class="t fade" style="left:977.4px;top:4px;line-height:14px;font-size:8.8px;color:#eeeeee;letter-spacing:-0.375px;width:15.5px;-webkit-text-stroke:.2px #eee">Mon</div>
<svg style="left:999.8px;top:8.400px;width:5.800px;height:5.800px" viewBox="0 0 6 6"><path d="M.4.400L5.600 5.600M5.600.400L.4 5.600" stroke="#f2f2f2" stroke-width="1.250" fill="none"/></svg>
<div class="abs" style="left:1071.4px;top:5px;width:1px;height:13px;background:#3a3a3a"></div>
<svg style="left:1021.0px;top:6.0px;width:10.7px;height:10.7px" viewBox="0 0 14 14"><path d="M4.700 1h4.600L14 9H9.400z" fill="#fbc02d"/><path d="M4.700 1L7 5 2.300 13 0 9z" fill="#1da462"/><path d="M4.600 9H14l-2.300 4H2.300z" fill="#4688f4"/></svg>
<div class="t" style="left:1036.7px;top:4px;line-height:14px;font-size:8.8px;color:#d4d4d4;letter-spacing:-0.63px;direction:rtl">האח</div>
<svg style="left:1059.0px;top:8.400px;width:5.800px;height:5.800px" viewBox="0 0 6 6"><path d="M.4.400L5.600 5.600M5.600.400L.4 5.600" stroke="#f2f2f2" stroke-width="1.250" fill="none"/></svg>
<div class="abs" style="left:1130.7px;top:5px;width:1px;height:13px;background:#3a3a3a"></div>
<svg style="left:1080.3px;top:6.0px;width:10.7px;height:10.7px" viewBox="0 0 14 14"><rect x="1.300" y="0" width="11.400" height="14" rx="1.400" fill="#4a8af4"/><path d="M4 4.500h6M4 7h6M4 9.500h4" stroke="#fff" stroke-width="1.300"/></svg>
<div class="t fade" style="left:1095.9px;top:4px;line-height:14px;font-size:8.8px;color:#eeeeee;letter-spacing:-0.594px;width:16.5px;-webkit-text-stroke:.2px #eee">CV ר</div>
<svg style="left:1118.3px;top:8.400px;width:5.800px;height:5.800px" viewBox="0 0 6 6"><path d="M.4.400L5.600 5.600M5.600.400L.4 5.600" stroke="#f2f2f2" stroke-width="1.250" fill="none"/></svg>
<svg style="left:1140.500px;top:6.500px;width:9px;height:9px" viewBox="0 0 9 9"><path d="M4.500 0v9M0 4.500h9" stroke="#f2f2f2" stroke-width="1.400"/></svg>
<div class="abs" style="left:1199px;top:9.500px;width:7px;height:1px;background:#d8d8d8"></div>
<svg style="left:1230px;top:5.500px;width:8px;height:8px" viewBox="0 0 8 8"><path d="M.5 2h5.500v5.500H.5zM2 2V.5h5.500V6H6" stroke="#d8d8d8" stroke-width=".9" fill="none"/></svg>
<svg style="left:1260.500px;top:5.500px;width:8px;height:8px" viewBox="0 0 8 8"><path d="M.3.300l7.400 7.400M7.700.300L.3 7.700" stroke="#f0f0f0" stroke-width="1" fill="none"/></svg>
<svg style="left:9.600px;top:30px;width:10px;height:9.400px" viewBox="0 0 10 9.400"><path d="M10 4.700H1.200M5 .5L.8 4.700 5 8.900" stroke="#e9e9e9" stroke-width="1.400" fill="none"/></svg>
<svg style="left:31px;top:30px;width:10px;height:9.400px" viewBox="0 0 10 9.400"><path d="M0 4.700H8.800M5 .5L9.200 4.700 5 8.900" stroke="#777" stroke-width="1.400" fill="none"/></svg>
<svg style="left:52.300px;top:29.500px;width:10.400px;height:10.400px" viewBox="0 0 12 12"><path d="M10.200 6.300A4.300 4.300 0 1 1 8.800 2.900" stroke="#e9e9e9" stroke-width="1.600" fill="none"/><path d="M11 .6v4.400H6.600z" fill="#e9e9e9"/></svg>
<div class="abs" style="left:72px;top:24.800px;width:1042px;height:19.200px;border-radius:9.600px;background:#f1f3f4"></div>
<svg style="left:79.400px;top:29.800px;width:9.400px;height:9.400px" viewBox="0 0 11 11"><circle cx="5.500" cy="5.500" r="4.700" fill="none" stroke="#5f6368" stroke-width="1.100"/><path d="M5.500 4.900v3.100M5.500 2.900v1.100" stroke="#5f6368" stroke-width="1.200"/></svg>
<div class="t" style="left:94.8px;top:27px;line-height:15px;font-size:9.6px;color:#2b2d30;letter-spacing:-0.141px">localhost<span style="color:#767a80">:3000/all</span></div>
<svg style="left:1054.500px;top:31.500px;width:10px;height:6.500px" viewBox="0 0 11 7"><circle cx="2.800" cy="3.200" r="2" fill="none" stroke="#5f6368" stroke-width="1.600"/><path d="M4.800 3.200H10.800M8.300 3.200v2.800M10.100 3.200v2.200" stroke="#5f6368" stroke-width="1.500" fill="none"/></svg>
<svg style="left:1075.500px;top:29.500px;width:10.500px;height:10.500px" viewBox="0 0 11 11"><rect x="0" y="0" width="7" height="7.500" rx="1" fill="#85888d"/><rect x="4.200" y="3" width="6.800" height="8" rx="1" fill="#c9cbcf" stroke="#85888d" stroke-width=".6"/><path d="M1.800 5.500L3.300 1.800 4.800 5.500" stroke="#e9e9e9" stroke-width=".8" fill="none"/><path d="M5.800 6h4M7.700 5v1q0 2-1.800 3.200" stroke="#5a5a5a" stroke-width=".8" fill="none"/></svg>
<svg style="left:1096.800px;top:29.300px;width:10.400px;height:10.400px" viewBox="0 0 12 12"><path d="M6 .9l1.600 3.500 3.800.4-2.800 2.600.8 3.700L6 9.200 2.600 11.100l.8-3.700L.6 4.800l3.800-.4z" fill="none" stroke="#5f6368" stroke-width="1.200" stroke-linejoin="round"/></svg>
<svg style="left:1123.0px;top:29.0px;width:11.4px;height:11.4px" viewBox="0 0 12 12"><circle cx="6" cy="6" r="5.900" fill="#9dbde2"/><circle cx="6" cy="6" r="4.600" fill="#c9dcf2"/><ellipse cx="6" cy="6.200" rx="2.700" ry="3.700" fill="#14213a"/><ellipse cx="5.300" cy="5" rx=".8" ry="1.400" fill="#4a6a9a"/></svg>
<svg style="left:1144.4px;top:29.0px;width:11.4px;height:11.4px" viewBox="0 0 12 12"><rect width="12" height="12" rx="1.200" fill="#cf3a30"/><path d="M2.500 4Q3 2 5 3.500 6 1.500 7.500 3 9.500 2 9.500 4.500 11 6.500 9 8L10 10H3.500L2 7.500z" fill="#f6d5d1"/><circle cx="6.800" cy="6.800" r="1.900" fill="#3d100e"/><path d="M5 5l4 4" stroke="#3d100e" stroke-width="1.200"/></svg>
<svg style="left:1165.6px;top:29.0px;width:11.4px;height:11.4px" viewBox="0 0 12 12"><path d="M3.500 0h5L12 3.500v5L8.500 12h-5L0 8.500v-5z" fill="#e61b17"/><path d="M4.200 6.800V3.300q.5-.6 1 0V2.500q.5-.6 1 0v.3q.5-.5 1 0v.7q.5-.4.900 0v4.200q0 2.400-2.100 2.400Q4.400 10.100 3.300 7.700q.3-.9.900-.9z" fill="#fff"/></svg>
<svg style="left:1187.0px;top:29.0px;width:11.4px;height:11.4px" viewBox="0 0 12 12"><circle cx="6" cy="6" r="5.400" fill="#1f3a30" stroke="#2fc486" stroke-width="1.100"/><circle cx="6" cy="6" r="3.400" fill="none" stroke="#2fc486" stroke-width="1"/><circle cx="6" cy="6" r="1.500" fill="#58e6a8"/><circle cx="3.300" cy="1.800" r="1" fill="#f0803c"/><circle cx="8.600" cy="3.800" r=".9" fill="#ef5a4a"/></svg>
<svg style="left:1208.2px;top:29.0px;width:11.4px;height:11.4px" viewBox="0 0 12 12"><circle cx="6" cy="6" r="5.900" fill="#e6e6e6"/><circle cx="6" cy="6.200" r="3.700" fill="#3c3c3c"/><circle cx="7.600" cy="4.700" r="1.700" fill="#e6e6e6"/></svg>
<div class="abs" style="left:1228px;top:28.500px;width:1px;height:12.500px;background:#4e4e4e"></div>
<svg style="left:1237.400px;top:28.200px;width:13.100px;height:13.100px" viewBox="0 0 14 14"><circle cx="7" cy="7" r="7" fill="#0a5547"/><path d="M7 6.300v3.800M7 4v1.300" stroke="#9fd6c6" stroke-width="1.800"/></svg>
<svg style="left:1264.600px;top:29.200px;width:2.800px;height:11px" viewBox="0 0 3 11"><circle cx="1.500" cy="1.400" r="1.250" fill="#ececec"/><circle cx="1.500" cy="5.500" r="1.250" fill="#ececec"/><circle cx="1.500" cy="9.600" r="1.250" fill="#ececec"/></svg>
<svg style="left:9.8px;top:51.3px;width:9.4px;height:9.4px" viewBox="0 0 12 12"><g><rect x="0" y="0" width="2.800" height="2.800" fill="#ea4335"/><rect x="4.600" y="0" width="2.800" height="2.800" fill="#ea4335"/><rect x="9.200" y="0" width="2.800" height="2.800" fill="#ea4335"/><rect x="0" y="4.600" width="2.800" height="2.800" fill="#34a853"/><rect x="4.600" y="4.600" width="2.800" height="2.800" fill="#4285f4"/><rect x="9.200" y="4.600" width="2.800" height="2.800" fill="#fbbc05"/><rect x="0" y="9.200" width="2.800" height="2.800" fill="#34a853"/><rect x="4.600" y="9.200" width="2.800" height="2.800" fill="#fbbc05"/><rect x="9.200" y="9.200" width="2.800" height="2.800" fill="#fbbc05"/></g></svg>
<div class="t" style="left:25px;top:49px;line-height:14px;font-size:9px;color:#ebebeb;letter-spacing:-0.504px;-webkit-text-stroke:.2px #ebebeb">Apps</div>
<svg style="left:54.3px;top:50.8px;width:10.4px;height:10.4px" viewBox="0 0 12 12"><path d="M1 10V3.500L4 6.500 6.500 3 9 6.500 11 4V10" stroke="#f0506e" stroke-width="1.900" fill="none" stroke-linejoin="round"/></svg>
<div class="t" style="left:70px;top:49px;line-height:14px;font-size:9px;color:#ebebeb;letter-spacing:-0.377px;-webkit-text-stroke:.2px #ebebeb">Documentation - M...</div>
<svg style="left:156.3px;top:50.8px;width:10.4px;height:10.4px" viewBox="0 0 12 12"><rect width="12" height="12" fill="#050505"/><path d="M4.500 9.800V4q0-1.600 2-1.600 2.300 0 2.300 2.100T6.500 6.900" stroke="#d6ff6b" stroke-width="1.400" fill="none"/><path d="M4.500 9.800V5" stroke="#35dfa0" stroke-width="1.400"/></svg>
<div class="t" style="left:172.5px;top:49px;line-height:14px;font-size:9px;color:#ebebeb;letter-spacing:-0.639px;-webkit-text-stroke:.2px #ebebeb">Passport.js</div>
<svg style="left:220.5px;top:50.8px;width:10.4px;height:10.4px" viewBox="0 0 14 14"><rect width="14" height="14" rx="1.300" fill="#0a66c2"/><rect x="2.200" y="5.400" width="2.100" height="6.400" fill="#fff"/><circle cx="3.250" cy="3.300" r="1.250" fill="#fff"/><path d="M6 5.400h2v1q.6-1.200 2.200-1.200 2.200 0 2.200 2.700v3.900h-2.100V8.300q0-1.300-1.100-1.300-1.200 0-1.200 1.500v3.300H6z" fill="#fff"/></svg>
<div class="t" style="left:236.5px;top:49px;line-height:14px;font-size:9px;color:#ebebeb;letter-spacing:-0.516px;-webkit-text-stroke:.2px #ebebeb">Career interests | Li...</div>
<svg style="left:323.3px;top:50.8px;width:10.4px;height:10.4px" viewBox="0 0 12 12"><path d="M6 0Q6.500 2 9 4 11.500 6 11 8.500 10 12 6 12 2 12 1 8.500 .5 6 3 4 5.500 2 6 0z" fill="#1a8ad1"/><path d="M3.500 8.500q1.500-1.500 3 0t3-.5q-.5 2.500-3 2.500T3.500 8.500z" fill="#e9f4fb"/></svg>
<div class="t" style="left:340.5px;top:49px;line-height:14px;font-size:9px;color:#ebebeb;letter-spacing:-0.351px;direction:rtl;-webkit-text-stroke:.2px #ebebeb">הגשות משימות ופרו...</div>
<svg style="left:425.8px;top:50.8px;width:10.4px;height:10.4px" viewBox="0 0 12 12"><rect width="12" height="12" rx="2.500" fill="#f5e642"/><ellipse cx="6" cy="6.800" rx="4" ry="3" fill="#49a85c"/><circle cx="4.500" cy="5" r="1.500" fill="#7b4fc9"/><path d="M6 3.300h4.300v2.200" stroke="#3a3a8a" stroke-width="1.100" fill="none"/></svg>
<div class="t" style="left:442px;top:49px;line-height:14px;font-size:9px;color:#ebebeb;letter-spacing:-0.525px;-webkit-text-stroke:.2px #ebebeb">Using Axios with Re...</div>
<svg style="left:528.3px;top:50.8px;width:10.4px;height:10.4px" viewBox="0 0 12 12"><path d="M2 1.500Q1.200 7 3 9.500q1.800 1.200 3.200-1.800L8.200 1.500M7 6Q7 11 10.800 9.500" stroke="#ea5252" stroke-width="1.900" fill="none" stroke-linecap="round"/></svg>
<div class="t" style="left:544.5px;top:49px;line-height:14px;font-size:9px;color:#ebebeb;letter-spacing:-0.548px;-webkit-text-stroke:.2px #ebebeb">Online Courses - Le...</div>
<svg style="left:632.3px;top:50.8px;width:10.4px;height:10.4px" viewBox="0 0 12 12"><circle cx="6" cy="6" r="4.300" fill="#f0741e"/><g stroke="#f0741e" stroke-width="1.400"><path d="M6 0v12M0 6h12M1.800 1.800l8.400 8.400M10.200 1.800l-8.400 8.400"/></g></svg>
<div class="t" style="left:647px;top:49px;line-height:14px;font-size:9px;color:#ebebeb;letter-spacing:-0.606px;-webkit-text-stroke:.2px #ebebeb">AccuWeather APIs |...</div>
<svg style="left:735.3px;top:50.8px;width:10.4px;height:10.4px" viewBox="0 0 12 12"><rect width="12" height="12" rx="1" fill="#e8eef8"/><rect x="0" y="2.800" width="12" height="2.500" fill="#3b6fd6"/><rect x="0" y="7.700" width="12" height="1.500" fill="#9db4e3"/></svg>
<div class="t" style="left:750px;top:49px;line-height:14px;font-size:9px;color:#ebebeb;letter-spacing:-0.711px;-webkit-text-stroke:.2px #ebebeb">React Select</div>
<svg style="left:805.3px;top:50.8px;width:10.4px;height:10.4px" viewBox="0 0 12 12"><circle cx="6" cy="6" r="5.900" fill="#191919"/><path d="M3.500 10.800V8.500Q2 7 2.600 4.800 2.400 3.600 3 2.800q1 .2 1.700.8 1.300-.3 2.600 0Q8 3 9 2.800q.6.800.4 2Q10 7 8.500 8.500v2.300" fill="#303030"/></svg>
<div class="t" style="left:819px;top:49px;line-height:14px;font-size:9px;color:#ebebeb;letter-spacing:-0.452px;-webkit-text-stroke:.2px #ebebeb">Nadav-Lalo-15-10-...</div>
<svg style="left:906.1px;top:50.8px;width:10.4px;height:10.4px" viewBox="0 0 12 12"><path d="M6 .8L10.600 3.400V8.600L6 11.200 1.400 8.600V3.400z" fill="none" stroke="#26a8f4" stroke-width="1.700"/></svg>
<div class="t" style="left:922px;top:49px;line-height:14px;font-size:9px;color:#ebebeb;letter-spacing:-0.503px;-webkit-text-stroke:.2px #ebebeb">Coderbyte</div>
<svg style="left:970.5px;top:50.8px;width:10.4px;height:10.4px" viewBox="0 0 14 14"><rect width="14" height="14" rx="1.300" fill="#0a66c2"/><rect x="2.200" y="5.400" width="2.100" height="6.400" fill="#fff"/><circle cx="3.250" cy="3.300" r="1.250" fill="#fff"/><path d="M6 5.400h2v1q.6-1.200 2.200-1.200 2.200 0 2.200 2.700v3.900h-2.100V8.300q0-1.300-1.100-1.300-1.200 0-1.200 1.500v3.300H6z" fill="#fff"/></svg>
<div class="t" style="left:986px;top:49px;line-height:14px;font-size:9px;color:#ebebeb;letter-spacing:-0.668px;-webkit-text-stroke:.2px #ebebeb">Email addresses | Li...</div>
<div class="abs" style="left:0;top:67px;width:1280px;height:1px;background:#1f1f1f"></div>
<div id="tb"></div>
<div class="abs" style="left:905px;top:700px;width:107px;height:20px;background:#3a3f50"></div>
<svg style="left:6.200px;top:704.500px;width:11.300px;height:10.600px" viewBox="0 0 11 11"><path d="M0 1.500L4.700.800V5.100H0zM5.400.700L11 0V5.100H5.400zM0 5.900h4.700v4.300L0 9.500zM5.400 5.900H11V11l-5.600-.8z" fill="#f6f6f6"/></svg>
<svg style="left:30.500px;top:704.500px;width:10.800px;height:11px" viewBox="0 0 12 12"><circle cx="7.500" cy="4.500" r="3.700" fill="none" stroke="#f2f2f2" stroke-width="1.200"/><path d="M4.800 7.300L.8 11.400" stroke="#f2f2f2" stroke-width="1.500"/></svg>
<svg style="left:56.2px;top:704.500px;width:8.800px;height:11px" viewBox="0 0 9 11"><path d="M0 0h7.500L9 1.500V11H0z" fill="#f9dd84"/><path d="M0 0h1.600v11H0z" fill="#e3b73a"/><path d="M1.600 9.500H9V11H1.600z" fill="#eac658"/></svg>
<div class="t" style="left:68.8px;top:702px;line-height:15px;font-size:9.4px;color:#f6f6f6;letter-spacing:-0.498px;-webkit-text-stroke:.2px #f6f6f6">projact-4</div>
<div class="ul" style="left:52.5px;width:101.300px"></div>
<svg style="left:162.5px;top:704.500px;width:9.500px;height:11px" viewBox="0 0 10 11"><path d="M3 0h4v5.500h3L5 11 0 5.500h3z" fill="#2d9af3"/></svg>
<div class="t" style="left:175.5px;top:702px;line-height:15px;font-size:9.4px;color:#f6f6f6;letter-spacing:-0.821px;-webkit-text-stroke:.2px #f6f6f6">Downloads</div>
<div class="ul" style="left:159.2px;width:101.300px"></div>
<svg style="left:270px;top:704.500px;width:8.800px;height:11px" viewBox="0 0 9 11"><path d="M0 0h7.500L9 1.500V11H0z" fill="#f9dd84"/><path d="M0 0h1.600v11H0z" fill="#e3b73a"/><path d="M1.600 9.500H9V11H1.600z" fill="#eac658"/></svg>
<div class="t" style="left:282px;top:702px;line-height:15px;font-size:9.4px;color:#f6f6f6;letter-spacing:-0.634px;-webkit-text-stroke:.2px #f6f6f6">New folder (2)</div>
<div class="ul" style="left:266px;width:101.300px"></div>
<svg style="left:376.2px;top:704.500px;width:8.800px;height:11px" viewBox="0 0 9 11"><path d="M0 0h7.500L9 1.500V11H0z" fill="#f9dd84"/><path d="M0 0h1.600v11H0z" fill="#e3b73a"/><path d="M1.600 9.500H9V11H1.600z" fill="#eac658"/></svg>
<div class="t" style="left:388.8px;top:702px;line-height:15px;font-size:9.4px;color:#f6f6f6;letter-spacing:-0.645px;-webkit-text-stroke:.2px #f6f6f6">projact3</div>
<div class="ul" style="left:372.6px;width:101.300px"></div>
<svg style="left:482.5px;top:704.500px;width:10.600px;height:10.800px" viewBox="0 0 11 11"><path d="M8 0l3 1.300v8.400L8 11 2.200 6.300 1 7.300 0 6.800V4.200l1-.5 1.200 1zM8 3.200L4.600 5.500 8 7.800z" fill="#2b9cf2"/></svg>
<div class="t" style="left:496.5px;top:702px;line-height:15px;font-size:9.4px;color:#f6f6f6;letter-spacing:-0.632px;-webkit-text-stroke:.2px #f6f6f6">● home.component....</div>
<div class="ul" style="left:479.2px;width:101.300px"></div>
<svg style="left:589.5px;top:704.500px;width:10.600px;height:10.800px" viewBox="0 0 11 11"><path d="M8 0l3 1.300v8.400L8 11 2.200 6.300 1 7.300 0 6.800V4.200l1-.5 1.200 1zM8 3.200L4.600 5.500 8 7.800z" fill="#2b9cf2"/></svg>
<div class="t" style="left:602.5px;top:702px;line-height:15px;font-size:9.4px;color:#f6f6f6;letter-spacing:-0.609px;-webkit-text-stroke:.2px #f6f6f6">projact3 - Visual Studi...</div>
<div class="ul" style="left:585.8px;width:101.300px"></div>
<svg style="left:696.2px;top:704.500px;width:10.800px;height:10.800px" viewBox="0 0 11 11"><circle cx="5.500" cy="5.500" r="5.500" fill="#fff"/><path d="M5.500 1Q8.200 4 5.700 9.300V10.500H5.300V9.300Q2.800 4 5.500 1z" fill="#3fa037"/></svg>
<div class="t" style="left:710px;top:702px;line-height:15px;font-size:9.4px;color:#f6f6f6;letter-spacing:-0.816px;-webkit-text-stroke:.2px #f6f6f6">MongoDB Compass ...</div>
<div class="ul" style="left:692.4px;width:101.300px"></div>
<svg style="left:804.3px;top:704.500px;width:10.500px;height:10.500px" viewBox="0 0 11 11"><circle cx="5.500" cy="5.500" r="5.500" fill="#e9433a"/><path d="M5.500 5.500L.7 2.800A5.500 5.500 0 0 0 5 11z" fill="#34a853"/><path d="M5.500 5.500L5 11A5.500 5.500 0 0 0 10.900 4.500z" fill="#fbc116"/><circle cx="5.500" cy="5.500" r="2.500" fill="#fff"/><circle cx="5.500" cy="5.500" r="1.900" fill="#4a8af4"/><rect x="6.300" y="6.300" width="4.700" height="4.700" rx=".8" fill="#eee"/></svg>
<div class="t" style="left:817.5px;top:702px;line-height:15px;font-size:9.4px;color:#f6f6f6;letter-spacing:-0.699px;-webkit-text-stroke:.2px #f6f6f6">(15) Spring Boot Quic...</div>
<div class="ul" style="left:799px;width:101.300px"></div>
<svg style="left:911px;top:704.500px;width:10.500px;height:10.500px" viewBox="0 0 11 11"><circle cx="5.500" cy="5.500" r="5.500" fill="#e9433a"/><path d="M5.500 5.500L.7 2.800A5.500 5.500 0 0 0 5 11z" fill="#34a853"/><path d="M5.500 5.500L5 11A5.500 5.500 0 0 0 10.900 4.500z" fill="#fbc116"/><circle cx="5.500" cy="5.500" r="2.500" fill="#fff"/><circle cx="5.500" cy="5.500" r="1.900" fill="#4a8af4"/><rect x="6.300" y="6.300" width="4.700" height="4.700" rx=".8" fill="#eee"/></svg>
<div class="t" style="left:924.2px;top:702px;line-height:15px;font-size:9.4px;color:#f6f6f6;letter-spacing:-0.72px;-webkit-text-stroke:.2px #f6f6f6">Bootstrap Example - ...</div>
<div class="ul" style="left:905.6px;width:101.300px"></div>
<svg style="left:1018px;top:704.500px;width:10.800px;height:10.800px" viewBox="0 0 11 11"><rect width="11" height="11" rx="1" fill="#f26b3a"/><circle cx="5.500" cy="5.500" r="4" fill="#fff"/><circle cx="5.800" cy="5.200" r="2.500" fill="#f26b3a"/><path d="M2.800 8.200l2.700-3.200" stroke="#fff" stroke-width="1"/></svg>
<div class="t" style="left:1032px;top:702px;line-height:15px;font-size:9.4px;color:#f6f6f6;letter-spacing:-0.929px;-webkit-text-stroke:.2px #f6f6f6">Postman</div>
<div class="ul" style="left:1015.5px;width:101.300px"></div>
<svg style="left:1166.200px;top:707.500px;width:8.800px;height:5px" viewBox="0 0 9 5"><path d="M.5 4.600l4-4 4 4" stroke="#f2f2f2" stroke-width="1.100" fill="none"/></svg>
<svg style="left:1181.200px;top:705.500px;width:10.800px;height:8.500px" viewBox="0 0 12 9"><rect x="1.800" y="2.600" width="9" height="5.600" fill="#f2f2f2"/><rect x="10.800" y="4" width="1.200" height="2.800" fill="#f2f2f2"/><path d="M0 0h2.600v3.800H0z" fill="#f2f2f2"/></svg>
<svg style="left:1198px;top:705px;width:10px;height:10px" viewBox="0 0 11 11"><path d="M1 10.500A9.500 9.500 0 0 1 10.500 1M3.700 10.500A6.800 6.800 0 0 1 10.500 3.700M6.300 10.500A4.200 4.200 0 0 1 10.500 6.300" stroke="#c2c2c2" stroke-width="1" fill="none"/><path d="M8 10.500l2.500-2.500v2.500z" fill="#f2f2f2"/></svg>
<svg style="left:1212.500px;top:705px;width:11.500px;height:10px" viewBox="0 0 13 11"><path d="M.5 3.800h2.200L5.700 1v9L2.700 7.200H.5z" fill="none" stroke="#f2f2f2" stroke-width="1"/><path d="M7.500 3.500q1.600 2 0 4M9.500 2q2.600 3.500 0 7" stroke="#8f8f8f" stroke-width=".9" fill="none"/></svg>
<div class="t" style="left:1230.8px;top:702px;line-height:15px;font-size:9.4px;color:#f6f6f6;letter-spacing:-1.776px;-webkit-text-stroke:.2px #f6f6f6">ENG</div>
<div class="t" style="left:1255px;top:702px;line-height:15px;font-size:9.4px;color:#f6f6f6;letter-spacing:-1.053px;-webkit-text-stroke:.2px #f6f6f6">11:01</div>
</body></html>
